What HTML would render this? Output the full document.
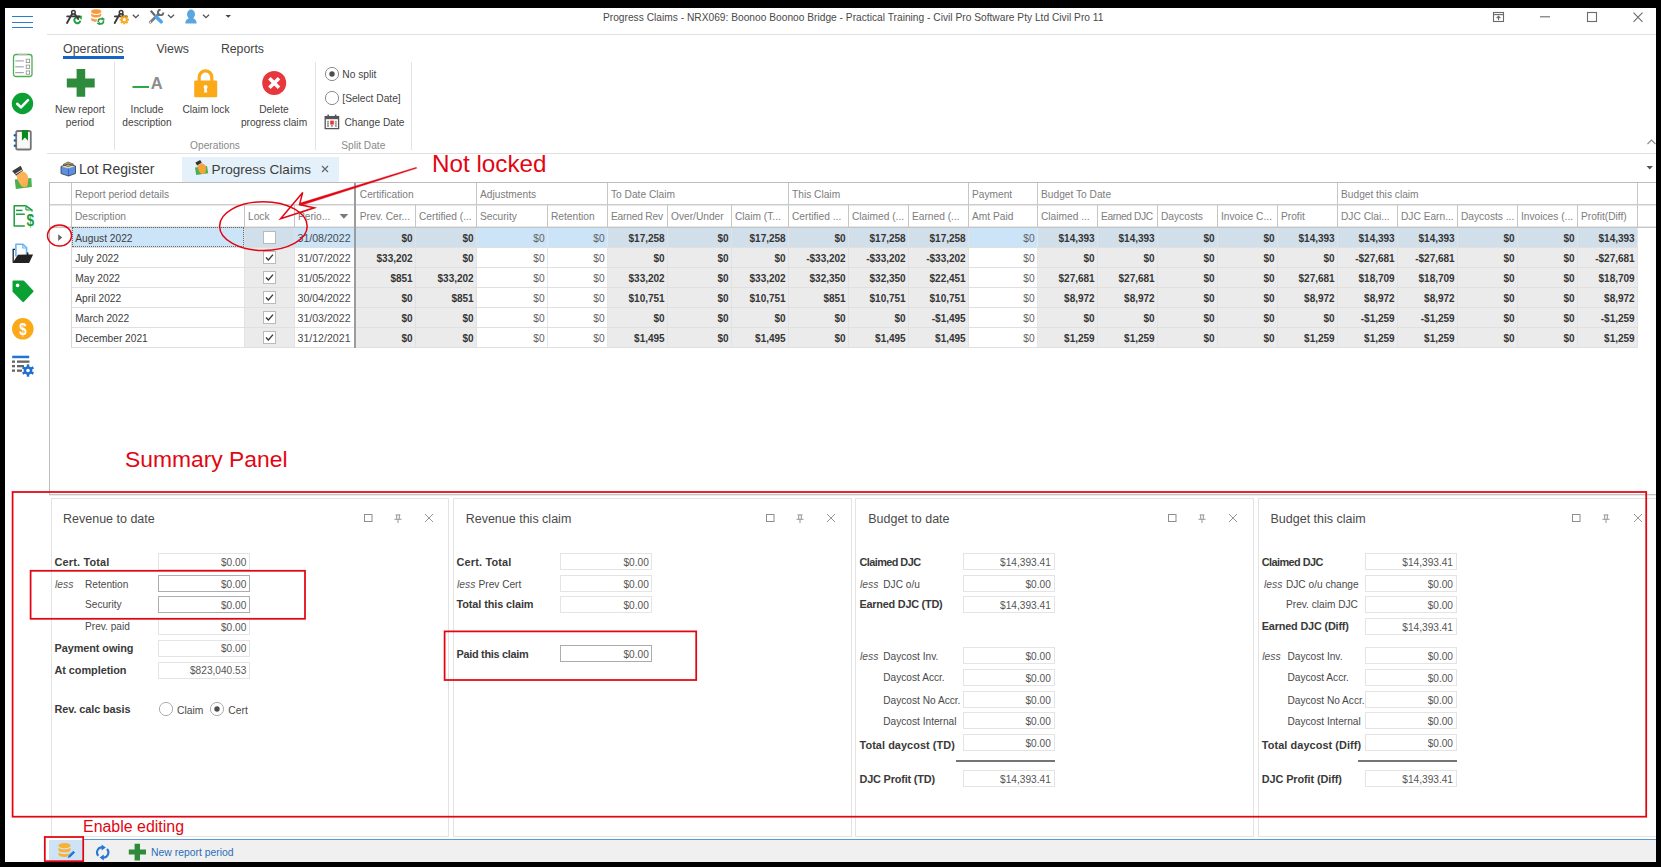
<!DOCTYPE html>
<html lang="en"><head><meta charset="utf-8"><title>Progress Claims</title><style>
html,body{margin:0;padding:0;}
body{width:1661px;height:867px;background:#000;position:relative;overflow:hidden;font-family:"Liberation Sans",sans-serif;color:#444;}
body div,body svg{position:absolute;}
.t{white-space:nowrap;overflow:visible;}
</style></head><body>
<div style="left:5px;top:8px;width:1651px;height:854px;background:#fff;"></div>
<div style="left:47px;top:34px;width:1609px;height:1px;background:#e1e1e1;"></div>
<div style="left:47px;top:153px;width:1609px;height:1px;background:#e1e1e1;"></div>
<div style="left:12px;top:16px;width:21px;height:1px;background:#2b7cd3;"></div>
<div style="left:12px;top:22px;width:21px;height:1px;background:#2b7cd3;"></div>
<div style="left:12px;top:27px;width:21px;height:1px;background:#2b7cd3;"></div>
<svg style="left:12px;top:53px;" width="22" height="25" viewBox="0 0 22 25"><rect x="1.5" y="1.5" width="18.5" height="22" rx="2.5" fill="#fff" stroke="#4caf50" stroke-width="1.3"/>
<line x1="6" y1="1.5" x2="15" y2="1.5" stroke="#b5b5b5" stroke-width="1.3"/>
<g stroke="#a8a8a8" stroke-width="1.2"><line x1="3.2" y1="7.9" x2="11.8" y2="7.9"/><line x1="3.2" y1="13.8" x2="11.8" y2="13.8"/><line x1="3.2" y1="19.6" x2="11.8" y2="19.6"/></g>
<g fill="#fff" stroke="#8f8f8f" stroke-width="0.8"><rect x="14.2" y="6.2" width="3.4" height="3.4"/><rect x="14.2" y="12.1" width="3.4" height="3.4"/><rect x="14.2" y="17.9" width="3.4" height="3.4"/></g></svg>
<svg style="left:11px;top:92px;" width="23" height="23" viewBox="0 0 23 23"><circle cx="11.5" cy="11.5" r="10.7" fill="#0ba034"/><path d="M6.2 11.8 L10 15.4 L17 8.2" fill="none" stroke="#fff" stroke-width="2.6" stroke-linecap="round" stroke-linejoin="round"/></svg>
<svg style="left:11px;top:129px;" width="23" height="23" viewBox="0 0 23 23"><rect x="5.2" y="2" width="14.6" height="18.5" rx="1.6" fill="#f8f8f8" stroke="#757575" stroke-width="1.8"/>
<path d="M10.9 1.1 H17 V11.7 L13.95 8.6 L10.9 11.7 Z" fill="#0a8a1c"/>
<g fill="#1f5f9f"><circle cx="3.9" cy="6.2" r="1.25"/><circle cx="3.9" cy="11.5" r="1.25"/><circle cx="3.9" cy="16.8" r="1.25"/></g></svg>
<svg style="left:10px;top:164px;" width="25" height="26" viewBox="0 0 25 26"><path d="M4.7 15.4 L21.3 13.9 L21.9 23.1 L5.9 24.9 Z" fill="#4caf50"/>
<path d="M2.2 7 L10.7 1.8 L13 6.7 L6.1 11.8 Z" fill="#3d3d3d"/><path d="M5.4 10 L12.3 5.9" stroke="#eee" stroke-width="1"/>
<path d="M6.6 11.6 L12.6 7.2 C16 8 18.6 11.4 18.2 15.4 L17.6 21.2 C16.6 23.4 13.6 23.6 12 22.4 C9 19.6 7.2 15.6 6.6 11.6 Z" fill="#fdb256"/>
<path d="M13.4 18.6 L13.8 22.4 M15.2 18.2 L15.6 22 M16.8 17.6 L17 20.8" stroke="#f7a03e" stroke-width="0.6"/></svg>
<svg style="left:11px;top:203px;" width="25" height="26" viewBox="0 0 25 26"><path d="M14.7 2.7 H3.2 V23.1 H13.8 M14.7 2.7 L21 7 V8.6" fill="none" stroke="#1b9e3e" stroke-width="1.5" stroke-linejoin="round"/>
<path d="M14.9 3.2 V7 H20.4 Z" fill="#cfe8d3" stroke="#1b9e3e" stroke-width="1" stroke-linejoin="round"/>
<g stroke="#1b9e3e" stroke-width="1.5"><line x1="5" y1="7.4" x2="11.5" y2="7.4"/><line x1="5" y1="11.2" x2="13.8" y2="11.2"/></g>
<text transform="translate(19.3,23.4) scale(0.8,1)" font-family="Liberation Sans, sans-serif" font-weight="bold" font-size="17.2" fill="#1b9e3e" text-anchor="middle">$</text></svg>
<svg style="left:11px;top:242px;" width="25" height="23" viewBox="0 0 25 23"><path d="M4.9 14.5 V2.2 H12 L15.6 5.8 V12" fill="#fff" stroke="#64b5f6" stroke-width="1.6" stroke-linejoin="round"/>
<path d="M11.8 2.4 V6 H15.4" fill="none" stroke="#64b5f6" stroke-width="1.2"/>
<path d="M4 7.4 H2.2 V20.4" fill="none" stroke="#222" stroke-width="1.3"/><path d="M6.9 12.7 L15.8 12.5 V10.6 H17.4 V12.5 L22.1 12.4 L18.1 20.9 H1.6 Z" fill="#222"/></svg>
<svg style="left:11px;top:279px;" width="24" height="25" viewBox="0 0 24 25"><path d="M2.6 2.6 H12.2 L21.4 12.3 L12.2 22 L2.6 12.3 Z" fill="#0ba034" stroke="#0ba034" stroke-width="2.2" stroke-linejoin="round"/><circle cx="6.6" cy="6.4" r="1.8" fill="#fff"/></svg>
<svg style="left:11px;top:317px;" width="24" height="24" viewBox="0 0 24 24"><circle cx="11.8" cy="11.8" r="10.8" fill="#fba919"/><text transform="translate(11.9,17.8) scale(0.78,1)" font-family="Liberation Sans, sans-serif" font-weight="bold" font-size="17" fill="#fff" text-anchor="middle">$</text></svg>
<svg style="left:11px;top:355px;" width="24" height="23" viewBox="0 0 24 23"><rect x="1.2" y="0.7" width="17" height="2.5" fill="#2273d6"/>
<g fill="#666"><rect x="1" y="5.5" width="3" height="2.3"/><rect x="6" y="5.5" width="12.5" height="2.3"/><rect x="1" y="10" width="3" height="2.3"/><rect x="6" y="10" width="7" height="2.3"/><rect x="1" y="14.5" width="3" height="2.3"/><rect x="6" y="14.5" width="5" height="2.3"/></g>
<g transform="translate(17,15.5)"><g fill="#1e6fd0"><circle r="4.3"/><g><rect x="-1.2" y="-6.2" width="2.4" height="12.4"/><rect x="-1.2" y="-6.2" width="2.4" height="12.4" transform="rotate(60)"/><rect x="-1.2" y="-6.2" width="2.4" height="12.4" transform="rotate(120)"/></g></g><circle r="1.8" fill="#fff"/></g></svg>
<svg style="left:65px;top:9px;" width="170" height="16" viewBox="0 0 170 16"><g transform="translate(12.3,11.1)"><path d="M2.2 -2 A3 3 0 1 0 3 0.6" fill="none" stroke="#18a03c" stroke-width="2"/><path d="M0.4 -4.6 L4.6 -4.4 L4.2 -0.2 Z" fill="#18a03c"/></g><g transform="translate(0,0)" fill="none" stroke="#3b3b3b" stroke-width="1.9" stroke-linecap="round"><circle cx="8.4" cy="3.2" r="1.8" stroke-width="1.5"/><path d="M7 5 L2 14 M9.8 5 L13.2 10 M2.2 7.4 H14.2" /></g><g transform="translate(26,0)"><g fill="#fb9a3c"><ellipse cx="5.2" cy="2.6" rx="5" ry="2.3"/><path d="M0.2 4.2 C1 6.6 9.4 6.6 10.2 4.2 V6.8 C9.4 9.2 1 9.2 0.2 6.8 Z"/><path d="M0.2 8.4 C1 10.8 9.4 10.8 10.2 8.4 V11 C9.4 13.4 1 13.4 0.2 11 Z"/></g>
<circle cx="9.9" cy="12.3" r="4.3" fill="#fff"/><g transform="translate(9.9,12.3)"><circle r="2.6" fill="none" stroke="#2e9b4b" stroke-width="1.6"/><rect x="-4.5" y="-0.7" width="9" height="1.4" fill="#fff" transform="rotate(-35)"/><path d="M0.8 -4.3 L4.3 -2 L1 -0.7 Z" fill="#2e9b4b"/><path d="M-0.8 4.3 L-4.3 2 L-1 0.7 Z" fill="#2e9b4b"/></g></g><g transform="translate(47.7,0)" fill="none" stroke="#3b3b3b" stroke-width="1.9" stroke-linecap="round"><circle cx="8.4" cy="3.2" r="1.8" stroke-width="1.5"/><path d="M7 5 L2 14 M9.8 5 L13.2 10 M2.2 7.4 H14.2" /></g><g transform="translate(59.3,10.7)"><g fill="#f6a821"><circle r="3.3"/><rect x="-1" y="-4.6" width="2" height="9.2"/><rect x="-1" y="-4.6" width="2" height="9.2" transform="rotate(45)"/><rect x="-1" y="-4.6" width="2" height="9.2" transform="rotate(90)"/><rect x="-1" y="-4.6" width="2" height="9.2" transform="rotate(135)"/></g><circle r="1.6" fill="#fff"/></g><path d="M67.8 5.7 L70.8 8.7 L73.8 5.7" fill="none" stroke="#555" stroke-width="1.3"/><g stroke-linecap="round" fill="none"><path d="M85.3 13.3 L93.3 5.3" stroke="#7a7a7a" stroke-width="2.7"/><circle cx="85.4" cy="13.2" r="0.7" fill="#fff" stroke="none"/>
<path d="M95.6 0.7 A2.7 2.7 0 1 0 98.3 3.4" stroke="#6a6a6a" stroke-width="1.9" stroke-linecap="butt"/>
<path d="M85.8 1.8 L90.2 6.9" stroke="#666" stroke-width="2.2" stroke-linecap="butt"/><path d="M91 7.7 L96.2 12.8" stroke="#4da3f0" stroke-width="3.6"/></g><path d="M103 5.7 L106 8.7 L109 5.7" fill="none" stroke="#555" stroke-width="1.3"/><g transform="translate(120,0)" fill="#5aa7e0"><ellipse cx="6" cy="5.2" rx="4" ry="4.6"/><path d="M0.3 14.4 C0.6 10.4 3 9.6 4.2 9 H7.8 C9 9.6 11.4 10.4 11.7 14.4 Z"/></g><path d="M138 5.7 L141 8.7 L144 5.7" fill="none" stroke="#555" stroke-width="1.3"/><path d="M160.5 6 H166 L163.25 8.8 Z" fill="#444"/></svg>
<div class="t" style="top:10px;height:16px;line-height:16px;font-size:10.2px;color:#4a4a4a;left:553.2px;width:600px;text-align:center;letter-spacing:0.012px;">Progress Claims - NRX069: Boonoo Boonoo Bridge - Practical Training - Civil Pro Software Pty Ltd Civil Pro 11</div>
<svg style="left:1490px;top:10px;" width="160" height="14" viewBox="0 0 160 14"><g fill="none" stroke="#6a6a6a" stroke-width="1.1"><rect x="3.5" y="2.5" width="10" height="9"/><line x1="3.5" y1="4.6" x2="13.5" y2="4.6"/><path d="M8.5 10.2 V6.4 M6.6 8.2 L8.5 6.3 L10.4 8.2"/>
<line x1="50" y1="6.8" x2="60" y2="6.8"/><rect x="97.5" y="2.5" width="9" height="9"/><path d="M143.5 2.6 L152.5 11.8 M152.5 2.6 L143.5 11.8"/></g></svg>
<div class="t" style="top:41px;height:16px;line-height:16px;font-size:12.45px;color:#444;left:63px;">Operations</div>
<div class="t" style="top:41px;height:16px;line-height:16px;font-size:12.3px;color:#444;left:156.4px;">Views</div>
<div class="t" style="top:41px;height:16px;line-height:16px;font-size:12.3px;color:#444;left:220.9px;">Reports</div>
<div style="left:63px;top:56px;width:61px;height:3px;background:#1565c8;"></div>
<div style="left:114px;top:62px;width:1px;height:88px;background:#e2e2e2;"></div>
<div style="left:315px;top:62px;width:1px;height:88px;background:#e2e2e2;"></div>
<div style="left:411px;top:62px;width:1px;height:88px;background:#e2e2e2;"></div>
<svg style="left:66px;top:68px;" width="30" height="30" viewBox="0 0 30 30"><path d="M10.6 1 H19.2 V10.5 H28.7 V19.5 H19.2 V28.8 H10.6 V19.5 H0.8 V10.5 H10.6 Z" fill="#2e8b3b"/></svg>
<div class="t" style="top:102px;height:16px;line-height:16px;font-size:10.2px;color:#444;left:20.0px;width:120px;text-align:center;">New report</div>
<div class="t" style="top:115px;height:16px;line-height:16px;font-size:10.2px;color:#444;left:20.0px;width:120px;text-align:center;">period</div>
<svg style="left:131px;top:74px;" width="34" height="18" viewBox="0 0 34 18"><rect x="1.5" y="12" width="16.5" height="2" fill="#2fa84a"/><text x="25.7" y="14.6" font-family="Liberation Sans, sans-serif" font-weight="bold" font-size="16.5" fill="#8c8c8c" text-anchor="middle">A</text></svg>
<div class="t" style="top:102px;height:16px;line-height:16px;font-size:10.2px;left:87.0px;width:120px;text-align:center;">Include</div>
<div class="t" style="top:115px;height:16px;line-height:16px;font-size:10.2px;left:87.0px;width:120px;text-align:center;">description</div>
<svg style="left:192px;top:68px;" width="28" height="31" viewBox="0 0 28 31"><path d="M7.2 14 V9.2 A6.3 6.3 0 0 1 19.8 9.2 V14" fill="none" stroke="#fba919" stroke-width="3.2"/><rect x="2.2" y="12.6" width="23" height="16.6" rx="1.2" fill="#fba919"/>
<circle cx="13.6" cy="19" r="2" fill="#fff"/><path d="M12.6 19.5 H14.6 L15.2 24.6 H12 Z" fill="#fff"/></svg>
<div class="t" style="top:102px;height:16px;line-height:16px;font-size:10.2px;left:146.0px;width:120px;text-align:center;">Claim lock</div>
<svg style="left:261px;top:70px;" width="27" height="27" viewBox="0 0 27 27"><circle cx="13.2" cy="13" r="12" fill="#e8363d"/><path d="M8.4 8.2 L18 17.8 M18 8.2 L8.4 17.8" stroke="#fff" stroke-width="3.6"/></svg>
<div class="t" style="top:102px;height:16px;line-height:16px;font-size:10.2px;left:214.0px;width:120px;text-align:center;">Delete</div>
<div class="t" style="top:115px;height:16px;line-height:16px;font-size:10.2px;left:214.0px;width:120px;text-align:center;">progress claim</div>
<svg style="left:323.7px;top:66px;" width="16" height="16" viewBox="0 0 16 16"><circle cx="8" cy="8" r="6.6" fill="#fff" stroke="#8c8c8c" stroke-width="1"/><circle cx="8" cy="8" r="2.7" fill="#4d4d4d"/></svg>
<div class="t" style="top:67px;height:16px;line-height:16px;font-size:10.2px;left:342.3px;">No split</div>
<svg style="left:323.7px;top:89.8px;" width="16" height="16" viewBox="0 0 16 16"><circle cx="8" cy="8" r="6.6" fill="#fff" stroke="#8c8c8c" stroke-width="1"/></svg>
<div class="t" style="top:91px;height:16px;line-height:16px;font-size:10.2px;left:342.3px;">[Select Date]</div>
<svg style="left:324px;top:114px;" width="16" height="16" viewBox="0 0 16 16"><rect x="1.2" y="2.6" width="13.4" height="12" fill="#fff" stroke="#555" stroke-width="1.3"/><rect x="1.2" y="2.6" width="13.4" height="2.6" fill="#555"/>
<rect x="3.4" y="0.6" width="1.6" height="3" fill="#555"/><rect x="10.8" y="0.6" width="1.6" height="3" fill="#555"/>
<g fill="#9a9a9a"><rect x="3" y="6.8" width="2" height="1.8"/><rect x="10.8" y="6.8" width="2" height="1.8"/><rect x="3" y="11" width="2" height="1.8"/><rect x="6.9" y="11" width="2" height="1.8"/><rect x="10.8" y="11" width="2" height="1.8"/><rect x="3" y="8.9" width="2" height="1.8"/><rect x="10.8" y="8.9" width="2" height="1.8"/></g><rect x="6.2" y="6.6" width="3.6" height="4" fill="#e53935"/></svg>
<div class="t" style="top:115px;height:16px;line-height:16px;font-size:10.2px;left:344.4px;">Change Date</div>
<div class="t" style="top:138px;height:16px;line-height:16px;font-size:10.2px;color:#8a8a8a;left:155.0px;width:120px;text-align:center;">Operations</div>
<div class="t" style="top:138px;height:16px;line-height:16px;font-size:10.2px;color:#8a8a8a;left:303.3px;width:120px;text-align:center;">Split Date</div>
<svg style="left:1646px;top:137px;" width="10" height="10" viewBox="0 0 10 10"><path d="M1.5 7 L5.5 3 L9.5 7" fill="none" stroke="#8a8a8a" stroke-width="1.1"/></svg>
<div style="left:182px;top:157px;width:157px;height:26px;background:#e4f0fa;"></div>
<svg style="left:59px;top:160px;" width="18" height="17" viewBox="0 0 18 17"><path d="M2 6.5 L9 4 L16.5 6 V13.5 L9.5 16 L2 13.5 Z" fill="#5b8fe6"/><path d="M2 6.5 L9.5 8.6 L16.5 6 L9 4 Z" fill="#e8d9a8"/><path d="M4 4.6 L9 2 L14.6 4.2 L9.4 6.6 Z" fill="#c9b77b" stroke="#555" stroke-width="0.8"/><path d="M9.5 8.6 V16" stroke="#2c5fa6" stroke-width="0.8"/><path d="M2 6.5 L9 4 L16.5 6 V13.5 L9.5 16 L2 13.5 Z" fill="none" stroke="#444" stroke-width="0.9"/></svg>
<div class="t" style="top:159px;height:20px;line-height:20px;font-size:14.0px;color:#3d3d3d;left:79px;">Lot Register</div>
<svg style="left:193px;top:159px;" width="16" height="17" viewBox="0 0 16 17"><path d="M2 8.6 L14 7 L15.2 14.2 L3.2 16 Z" fill="#4caf50"/><path d="M2.4 3.6 L7.2 1 L8.8 3.8 L4 6.4 Z" fill="#333"/>
<path d="M4.4 6.4 L9.2 4.2 C12 5.2 13.4 7.2 13 10.4 L12.2 14.2 C10.4 15.4 7.8 15.2 6.8 13.6 C5.2 11 4.8 9 4.4 6.4 Z" fill="#f6a33b"/></svg>
<div class="t" style="top:160px;height:20px;line-height:20px;font-size:13.55px;color:#3d3d3d;left:211.6px;">Progress Claims</div>
<svg style="left:320px;top:164px;" width="10" height="10" viewBox="0 0 10 10"><path d="M2 2 L8 8 M8 2 L2 8" stroke="#666" stroke-width="1.2"/></svg>
<svg style="left:1646px;top:165px;" width="8" height="6" viewBox="0 0 8 6"><path d="M0.5 1 H7 L3.75 4.4 Z" fill="#555"/></svg>
<div style="left:45px;top:840px;width:1611px;height:22px;background:#f0f0f0;"></div>
<div style="left:83px;top:839px;width:1573px;height:1px;background:#5b9bd5;"></div>
<div style="left:46px;top:839px;width:37px;height:23px;background:#fff;"></div>
<div style="left:49px;top:840px;width:34px;height:22px;background:#cfe3f6;"></div>
<svg style="left:57px;top:842px;" width="20" height="19" viewBox="0 0 20 19"><g fill="#fbb030"><ellipse cx="7.5" cy="3.6" rx="6" ry="2.6"/><path d="M1.5 5.6 C2.5 8.2 12.5 8.2 13.5 5.6 V8.4 C12.5 11 2.5 11 1.5 8.4 Z"/><path d="M1.5 10.2 C2.5 12.8 12.5 12.8 13.5 10.2 V13 C12.5 15.6 2.5 15.6 1.5 13 Z"/></g>
<path d="M10.2 16.6 L11 13.6 L16.2 8.4 L18.4 10.6 L13.2 15.8 Z" fill="#2677d4" stroke="#cfe3f6" stroke-width="0.8"/></svg>
<svg style="left:95px;top:844px;" width="16" height="17" viewBox="0 0 16 17"><g fill="none" stroke="#2677d4" stroke-width="2.1"><path d="M3.4 11.8 A5 5 0 0 1 7.6 3.4"/><path d="M12 5 A5 5 0 0 1 7.8 13.4"/></g><path d="M6.6 0.4 L10.8 3.4 L6.6 6.4 Z" fill="#2677d4"/><path d="M8.8 10.4 L4.6 13.4 L8.8 16.4 Z" fill="#2677d4"/></svg>
<svg style="left:128px;top:843px;" width="19" height="18" viewBox="0 0 19 18"><path d="M6.6 0.8 H12 V6.4 H18 V11.6 H12 V17.4 H6.6 V11.6 H0.8 V6.4 H6.6 Z" fill="#2e8b3b"/></svg>
<div class="t" style="top:845px;height:16px;line-height:16px;font-size:10.4px;color:#2a6db8;left:151px;">New report period</div>
<div style="left:49px;top:182px;width:1607px;height:1px;background:#bdbdbd;"></div>
<div style="left:49px;top:182px;width:1px;height:313px;background:#bdbdbd;"></div>
<div style="left:49px;top:494px;width:1607px;height:1px;background:#c4c4c4;"></div>
<div style="left:49px;top:495px;width:1607px;height:1px;background:#ececec;"></div>
<div style="left:49px;top:204px;width:1607px;height:1px;background:#cdcdcd;"></div>
<div style="left:49px;top:205px;width:1607px;height:1px;background:#e6e6e6;"></div>
<div style="left:49px;top:226px;width:1607px;height:1px;background:#e9e9e9;"></div>
<div style="left:49px;top:227px;width:1607px;height:1px;background:#c4c4c4;"></div>
<div style="left:49px;top:182px;width:1px;height:313px;background:#bdbdbd;"></div>
<div style="left:354px;top:183px;width:1px;height:21px;background:#c6c6c6;"></div>
<div class="t" style="top:187px;height:16px;line-height:16px;font-size:10.2px;color:#7d7d7d;left:75px;">Report period details</div>
<div style="left:476px;top:183px;width:1px;height:21px;background:#c6c6c6;"></div>
<div class="t" style="top:187px;height:16px;line-height:16px;font-size:10.2px;color:#7d7d7d;left:359.8px;">Certification</div>
<div style="left:607px;top:183px;width:1px;height:21px;background:#c6c6c6;"></div>
<div class="t" style="top:187px;height:16px;line-height:16px;font-size:10.2px;color:#7d7d7d;left:480px;">Adjustments</div>
<div style="left:788px;top:183px;width:1px;height:21px;background:#c6c6c6;"></div>
<div class="t" style="top:187px;height:16px;line-height:16px;font-size:10.2px;color:#7d7d7d;left:611px;">To Date Claim</div>
<div style="left:968px;top:183px;width:1px;height:21px;background:#c6c6c6;"></div>
<div class="t" style="top:187px;height:16px;line-height:16px;font-size:10.2px;color:#7d7d7d;left:792px;">This Claim</div>
<div style="left:1037px;top:183px;width:1px;height:21px;background:#c6c6c6;"></div>
<div class="t" style="top:187px;height:16px;line-height:16px;font-size:10.2px;color:#7d7d7d;left:972px;">Payment</div>
<div style="left:1337px;top:183px;width:1px;height:21px;background:#c6c6c6;"></div>
<div class="t" style="top:187px;height:16px;line-height:16px;font-size:10.2px;color:#7d7d7d;left:1041px;">Budget To Date</div>
<div style="left:1637px;top:183px;width:1px;height:21px;background:#c6c6c6;"></div>
<div class="t" style="top:187px;height:16px;line-height:16px;font-size:10.2px;color:#7d7d7d;left:1341px;">Budget this claim</div>
<div style="left:71px;top:183px;width:1px;height:44px;background:#c6c6c6;"></div>
<div style="left:244px;top:205px;width:1px;height:22px;background:#c6c6c6;"></div>
<div class="t" style="top:209px;height:16px;line-height:16px;font-size:10.2px;color:#7d7d7d;left:75px;">Description</div>
<div style="left:294px;top:205px;width:1px;height:22px;background:#c6c6c6;"></div>
<div class="t" style="top:209px;height:16px;line-height:16px;font-size:10.2px;color:#7d7d7d;left:248px;">Lock</div>
<div style="left:354px;top:205px;width:1px;height:22px;background:#c6c6c6;"></div>
<div class="t" style="top:209px;height:16px;line-height:16px;font-size:10.2px;color:#7d7d7d;left:298px;">Perio...</div>
<div style="left:415px;top:205px;width:1px;height:22px;background:#c6c6c6;"></div>
<div class="t" style="top:209px;height:16px;line-height:16px;font-size:10.2px;color:#7d7d7d;left:359.8px;">Prev. Cer...</div>
<div style="left:476px;top:205px;width:1px;height:22px;background:#c6c6c6;"></div>
<div class="t" style="top:209px;height:16px;line-height:16px;font-size:10.2px;color:#7d7d7d;left:419px;">Certified (...</div>
<div style="left:547px;top:205px;width:1px;height:22px;background:#c6c6c6;"></div>
<div class="t" style="top:209px;height:16px;line-height:16px;font-size:10.2px;color:#7d7d7d;left:480px;">Security</div>
<div style="left:607px;top:205px;width:1px;height:22px;background:#c6c6c6;"></div>
<div class="t" style="top:209px;height:16px;line-height:16px;font-size:10.2px;color:#7d7d7d;left:551px;">Retention</div>
<div style="left:667px;top:205px;width:1px;height:22px;background:#c6c6c6;"></div>
<div class="t" style="top:209px;height:16px;line-height:16px;font-size:10.2px;color:#7d7d7d;left:611px;letter-spacing:-0.2px;">Earned Rev</div>
<div style="left:731px;top:205px;width:1px;height:22px;background:#c6c6c6;"></div>
<div class="t" style="top:209px;height:16px;line-height:16px;font-size:10.2px;color:#7d7d7d;left:671px;">Over/Under</div>
<div style="left:788px;top:205px;width:1px;height:22px;background:#c6c6c6;"></div>
<div class="t" style="top:209px;height:16px;line-height:16px;font-size:10.2px;color:#7d7d7d;left:735px;">Claim (T...</div>
<div style="left:848px;top:205px;width:1px;height:22px;background:#c6c6c6;"></div>
<div class="t" style="top:209px;height:16px;line-height:16px;font-size:10.2px;color:#7d7d7d;left:792px;">Certified ...</div>
<div style="left:908px;top:205px;width:1px;height:22px;background:#c6c6c6;"></div>
<div class="t" style="top:209px;height:16px;line-height:16px;font-size:10.2px;color:#7d7d7d;left:852px;">Claimed (...</div>
<div style="left:968px;top:205px;width:1px;height:22px;background:#c6c6c6;"></div>
<div class="t" style="top:209px;height:16px;line-height:16px;font-size:10.2px;color:#7d7d7d;left:912px;">Earned (...</div>
<div style="left:1037px;top:205px;width:1px;height:22px;background:#c6c6c6;"></div>
<div class="t" style="top:209px;height:16px;line-height:16px;font-size:10.2px;color:#7d7d7d;left:972px;">Amt Paid</div>
<div style="left:1097px;top:205px;width:1px;height:22px;background:#c6c6c6;"></div>
<div class="t" style="top:209px;height:16px;line-height:16px;font-size:10.2px;color:#7d7d7d;left:1041px;">Claimed ...</div>
<div style="left:1157px;top:205px;width:1px;height:22px;background:#c6c6c6;"></div>
<div class="t" style="top:209px;height:16px;line-height:16px;font-size:10.2px;color:#7d7d7d;left:1101px;letter-spacing:-0.37px;">Earned DJC</div>
<div style="left:1217px;top:205px;width:1px;height:22px;background:#c6c6c6;"></div>
<div class="t" style="top:209px;height:16px;line-height:16px;font-size:10.2px;color:#7d7d7d;left:1161px;">Daycosts</div>
<div style="left:1277px;top:205px;width:1px;height:22px;background:#c6c6c6;"></div>
<div class="t" style="top:209px;height:16px;line-height:16px;font-size:10.2px;color:#7d7d7d;left:1221px;">Invoice C...</div>
<div style="left:1337px;top:205px;width:1px;height:22px;background:#c6c6c6;"></div>
<div class="t" style="top:209px;height:16px;line-height:16px;font-size:10.2px;color:#7d7d7d;left:1281px;">Profit</div>
<div style="left:1397px;top:205px;width:1px;height:22px;background:#c6c6c6;"></div>
<div class="t" style="top:209px;height:16px;line-height:16px;font-size:10.2px;color:#7d7d7d;left:1341px;">DJC Clai...</div>
<div style="left:1457px;top:205px;width:1px;height:22px;background:#c6c6c6;"></div>
<div class="t" style="top:209px;height:16px;line-height:16px;font-size:10.2px;color:#7d7d7d;left:1401px;">DJC Earn...</div>
<div style="left:1517px;top:205px;width:1px;height:22px;background:#c6c6c6;"></div>
<div class="t" style="top:209px;height:16px;line-height:16px;font-size:10.2px;color:#7d7d7d;left:1461px;">Daycosts ...</div>
<div style="left:1577px;top:205px;width:1px;height:22px;background:#c6c6c6;"></div>
<div class="t" style="top:209px;height:16px;line-height:16px;font-size:10.2px;color:#7d7d7d;left:1521px;">Invoices (...</div>
<div style="left:1637px;top:205px;width:1px;height:22px;background:#c6c6c6;"></div>
<div class="t" style="top:209px;height:16px;line-height:16px;font-size:10.2px;color:#7d7d7d;left:1581px;">Profit(Diff)</div>
<div style="left:354px;top:183px;width:2px;height:165px;background:#9c9c9c;"></div>
<svg style="left:339px;top:213px;" width="10" height="7" viewBox="0 0 10 7"><path d="M0.6 1 H9.2 L4.9 5.8 Z" fill="#7a7a7a"/></svg>
<div style="left:72px;top:228px;width:172px;height:19px;background:#cce4f7;"></div>
<div class="t" style="top:231px;height:16px;line-height:16px;font-size:10.2px;color:#3c3c3c;left:75.3px;">August 2022</div>
<div style="left:245px;top:228px;width:49px;height:19px;background:#d1dfea;"></div>
<svg style="left:263px;top:231px;" width="13" height="13" viewBox="0 0 13 13"><rect x="0.5" y="0.5" width="12" height="12" fill="#fff" stroke="#b9b9b9"/></svg>
<div style="left:295px;top:228px;width:59px;height:19px;background:#cce4f7;"></div>
<div class="t" style="top:230px;height:16px;line-height:16px;font-size:10.6px;color:#4a4a4a;left:297.5px;">31/08/2022</div>
<div style="left:356px;top:228px;width:59px;height:19px;background:#d1dfea;"></div>
<div class="t" style="top:231px;height:16px;line-height:16px;font-size:10.0px;color:#353535;font-weight:bold;left:352.7px;width:60px;text-align:right;">$0</div>
<div style="left:415px;top:228px;width:1px;height:19px;background:#e2e2e2;"></div>
<div style="left:416px;top:228px;width:60px;height:19px;background:#d1dfea;"></div>
<div class="t" style="top:231px;height:16px;line-height:16px;font-size:10.0px;color:#353535;font-weight:bold;left:413.7px;width:60px;text-align:right;">$0</div>
<div style="left:476px;top:228px;width:1px;height:19px;background:#e2e2e2;"></div>
<div style="left:477px;top:228px;width:70px;height:19px;background:#cce4f7;"></div>
<div class="t" style="top:231px;height:16px;line-height:16px;font-size:10.2px;color:#626262;left:484.70000000000005px;width:60px;text-align:right;">$0</div>
<div style="left:547px;top:228px;width:1px;height:19px;background:#e6e6e6;"></div>
<div style="left:548px;top:228px;width:59px;height:19px;background:#cce4f7;"></div>
<div class="t" style="top:231px;height:16px;line-height:16px;font-size:10.2px;color:#626262;left:544.7px;width:60px;text-align:right;">$0</div>
<div style="left:607px;top:228px;width:1px;height:19px;background:#e6e6e6;"></div>
<div style="left:608px;top:228px;width:59px;height:19px;background:#d1dfea;"></div>
<div class="t" style="top:231px;height:16px;line-height:16px;font-size:10.0px;color:#353535;font-weight:bold;left:604.7px;width:60px;text-align:right;">$17,258</div>
<div style="left:667px;top:228px;width:1px;height:19px;background:#e2e2e2;"></div>
<div style="left:668px;top:228px;width:63px;height:19px;background:#d1dfea;"></div>
<div class="t" style="top:231px;height:16px;line-height:16px;font-size:10.0px;color:#353535;font-weight:bold;left:668.7px;width:60px;text-align:right;">$0</div>
<div style="left:731px;top:228px;width:1px;height:19px;background:#e2e2e2;"></div>
<div style="left:732px;top:228px;width:56px;height:19px;background:#d1dfea;"></div>
<div class="t" style="top:231px;height:16px;line-height:16px;font-size:10.0px;color:#353535;font-weight:bold;left:725.7px;width:60px;text-align:right;">$17,258</div>
<div style="left:788px;top:228px;width:1px;height:19px;background:#e2e2e2;"></div>
<div style="left:789px;top:228px;width:59px;height:19px;background:#d1dfea;"></div>
<div class="t" style="top:231px;height:16px;line-height:16px;font-size:10.0px;color:#353535;font-weight:bold;left:785.7px;width:60px;text-align:right;">$0</div>
<div style="left:848px;top:228px;width:1px;height:19px;background:#e2e2e2;"></div>
<div style="left:849px;top:228px;width:59px;height:19px;background:#d1dfea;"></div>
<div class="t" style="top:231px;height:16px;line-height:16px;font-size:10.0px;color:#353535;font-weight:bold;left:845.7px;width:60px;text-align:right;">$17,258</div>
<div style="left:908px;top:228px;width:1px;height:19px;background:#e2e2e2;"></div>
<div style="left:909px;top:228px;width:59px;height:19px;background:#d1dfea;"></div>
<div class="t" style="top:231px;height:16px;line-height:16px;font-size:10.0px;color:#353535;font-weight:bold;left:905.7px;width:60px;text-align:right;">$17,258</div>
<div style="left:968px;top:228px;width:1px;height:19px;background:#e2e2e2;"></div>
<div style="left:969px;top:228px;width:68px;height:19px;background:#cce4f7;"></div>
<div class="t" style="top:231px;height:16px;line-height:16px;font-size:10.2px;color:#626262;left:974.7px;width:60px;text-align:right;">$0</div>
<div style="left:1037px;top:228px;width:1px;height:19px;background:#e6e6e6;"></div>
<div style="left:1038px;top:228px;width:59px;height:19px;background:#d1dfea;"></div>
<div class="t" style="top:231px;height:16px;line-height:16px;font-size:10.0px;color:#353535;font-weight:bold;left:1034.7px;width:60px;text-align:right;">$14,393</div>
<div style="left:1097px;top:228px;width:1px;height:19px;background:#e2e2e2;"></div>
<div style="left:1098px;top:228px;width:59px;height:19px;background:#d1dfea;"></div>
<div class="t" style="top:231px;height:16px;line-height:16px;font-size:10.0px;color:#353535;font-weight:bold;left:1094.7px;width:60px;text-align:right;">$14,393</div>
<div style="left:1157px;top:228px;width:1px;height:19px;background:#e2e2e2;"></div>
<div style="left:1158px;top:228px;width:59px;height:19px;background:#d1dfea;"></div>
<div class="t" style="top:231px;height:16px;line-height:16px;font-size:10.0px;color:#353535;font-weight:bold;left:1154.7px;width:60px;text-align:right;">$0</div>
<div style="left:1217px;top:228px;width:1px;height:19px;background:#e2e2e2;"></div>
<div style="left:1218px;top:228px;width:59px;height:19px;background:#d1dfea;"></div>
<div class="t" style="top:231px;height:16px;line-height:16px;font-size:10.0px;color:#353535;font-weight:bold;left:1214.7px;width:60px;text-align:right;">$0</div>
<div style="left:1277px;top:228px;width:1px;height:19px;background:#e2e2e2;"></div>
<div style="left:1278px;top:228px;width:59px;height:19px;background:#d1dfea;"></div>
<div class="t" style="top:231px;height:16px;line-height:16px;font-size:10.0px;color:#353535;font-weight:bold;left:1274.7px;width:60px;text-align:right;">$14,393</div>
<div style="left:1337px;top:228px;width:1px;height:19px;background:#e2e2e2;"></div>
<div style="left:1338px;top:228px;width:59px;height:19px;background:#d1dfea;"></div>
<div class="t" style="top:231px;height:16px;line-height:16px;font-size:10.0px;color:#353535;font-weight:bold;left:1334.7px;width:60px;text-align:right;">$14,393</div>
<div style="left:1397px;top:228px;width:1px;height:19px;background:#e2e2e2;"></div>
<div style="left:1398px;top:228px;width:59px;height:19px;background:#d1dfea;"></div>
<div class="t" style="top:231px;height:16px;line-height:16px;font-size:10.0px;color:#353535;font-weight:bold;left:1394.7px;width:60px;text-align:right;">$14,393</div>
<div style="left:1457px;top:228px;width:1px;height:19px;background:#e2e2e2;"></div>
<div style="left:1458px;top:228px;width:59px;height:19px;background:#d1dfea;"></div>
<div class="t" style="top:231px;height:16px;line-height:16px;font-size:10.0px;color:#353535;font-weight:bold;left:1454.7px;width:60px;text-align:right;">$0</div>
<div style="left:1517px;top:228px;width:1px;height:19px;background:#e2e2e2;"></div>
<div style="left:1518px;top:228px;width:59px;height:19px;background:#d1dfea;"></div>
<div class="t" style="top:231px;height:16px;line-height:16px;font-size:10.0px;color:#353535;font-weight:bold;left:1514.7px;width:60px;text-align:right;">$0</div>
<div style="left:1577px;top:228px;width:1px;height:19px;background:#e2e2e2;"></div>
<div style="left:1578px;top:228px;width:59px;height:19px;background:#d1dfea;"></div>
<div class="t" style="top:231px;height:16px;line-height:16px;font-size:10.0px;color:#353535;font-weight:bold;left:1574.7px;width:60px;text-align:right;">$14,393</div>
<div style="left:1637px;top:228px;width:1px;height:19px;background:#e2e2e2;"></div>
<div style="left:244px;top:228px;width:1px;height:19px;background:#e2e2e2;"></div>
<div style="left:294px;top:228px;width:1px;height:19px;background:#e2e2e2;"></div>
<div style="left:72px;top:247px;width:1566px;height:1px;background:#e0e0e0;"></div>
<div style="left:72px;top:248px;width:172px;height:19px;background:#fff;"></div>
<div class="t" style="top:251px;height:16px;line-height:16px;font-size:10.2px;color:#3c3c3c;left:75.3px;">July 2022</div>
<div style="left:245px;top:248px;width:49px;height:19px;background:#ebebeb;"></div>
<svg style="left:263px;top:251px;" width="13" height="13" viewBox="0 0 13 13"><rect x="0.5" y="0.5" width="12" height="12" fill="#fff" stroke="#b9b9b9"/><path d="M3 6.6 L5.4 9 L10 3.6" fill="none" stroke="#3a3a3a" stroke-width="1.4"/></svg>
<div style="left:295px;top:248px;width:59px;height:19px;background:#fff;"></div>
<div class="t" style="top:250px;height:16px;line-height:16px;font-size:10.6px;color:#4a4a4a;left:297.5px;">31/07/2022</div>
<div style="left:356px;top:248px;width:59px;height:19px;background:#ebebeb;"></div>
<div class="t" style="top:251px;height:16px;line-height:16px;font-size:10.0px;color:#353535;font-weight:bold;left:352.7px;width:60px;text-align:right;">$33,202</div>
<div style="left:415px;top:248px;width:1px;height:19px;background:#e2e2e2;"></div>
<div style="left:416px;top:248px;width:60px;height:19px;background:#ebebeb;"></div>
<div class="t" style="top:251px;height:16px;line-height:16px;font-size:10.0px;color:#353535;font-weight:bold;left:413.7px;width:60px;text-align:right;">$0</div>
<div style="left:476px;top:248px;width:1px;height:19px;background:#e2e2e2;"></div>
<div style="left:477px;top:248px;width:70px;height:19px;background:#fff;"></div>
<div class="t" style="top:251px;height:16px;line-height:16px;font-size:10.2px;color:#626262;left:484.70000000000005px;width:60px;text-align:right;">$0</div>
<div style="left:547px;top:248px;width:1px;height:19px;background:#e6e6e6;"></div>
<div style="left:548px;top:248px;width:59px;height:19px;background:#fff;"></div>
<div class="t" style="top:251px;height:16px;line-height:16px;font-size:10.2px;color:#626262;left:544.7px;width:60px;text-align:right;">$0</div>
<div style="left:607px;top:248px;width:1px;height:19px;background:#e6e6e6;"></div>
<div style="left:608px;top:248px;width:59px;height:19px;background:#ebebeb;"></div>
<div class="t" style="top:251px;height:16px;line-height:16px;font-size:10.0px;color:#353535;font-weight:bold;left:604.7px;width:60px;text-align:right;">$0</div>
<div style="left:667px;top:248px;width:1px;height:19px;background:#e2e2e2;"></div>
<div style="left:668px;top:248px;width:63px;height:19px;background:#ebebeb;"></div>
<div class="t" style="top:251px;height:16px;line-height:16px;font-size:10.0px;color:#353535;font-weight:bold;left:668.7px;width:60px;text-align:right;">$0</div>
<div style="left:731px;top:248px;width:1px;height:19px;background:#e2e2e2;"></div>
<div style="left:732px;top:248px;width:56px;height:19px;background:#ebebeb;"></div>
<div class="t" style="top:251px;height:16px;line-height:16px;font-size:10.0px;color:#353535;font-weight:bold;left:725.7px;width:60px;text-align:right;">$0</div>
<div style="left:788px;top:248px;width:1px;height:19px;background:#e2e2e2;"></div>
<div style="left:789px;top:248px;width:59px;height:19px;background:#ebebeb;"></div>
<div class="t" style="top:251px;height:16px;line-height:16px;font-size:10.0px;color:#353535;font-weight:bold;left:785.7px;width:60px;text-align:right;">-$33,202</div>
<div style="left:848px;top:248px;width:1px;height:19px;background:#e2e2e2;"></div>
<div style="left:849px;top:248px;width:59px;height:19px;background:#ebebeb;"></div>
<div class="t" style="top:251px;height:16px;line-height:16px;font-size:10.0px;color:#353535;font-weight:bold;left:845.7px;width:60px;text-align:right;">-$33,202</div>
<div style="left:908px;top:248px;width:1px;height:19px;background:#e2e2e2;"></div>
<div style="left:909px;top:248px;width:59px;height:19px;background:#ebebeb;"></div>
<div class="t" style="top:251px;height:16px;line-height:16px;font-size:10.0px;color:#353535;font-weight:bold;left:905.7px;width:60px;text-align:right;">-$33,202</div>
<div style="left:968px;top:248px;width:1px;height:19px;background:#e2e2e2;"></div>
<div style="left:969px;top:248px;width:68px;height:19px;background:#fff;"></div>
<div class="t" style="top:251px;height:16px;line-height:16px;font-size:10.2px;color:#626262;left:974.7px;width:60px;text-align:right;">$0</div>
<div style="left:1037px;top:248px;width:1px;height:19px;background:#e6e6e6;"></div>
<div style="left:1038px;top:248px;width:59px;height:19px;background:#ebebeb;"></div>
<div class="t" style="top:251px;height:16px;line-height:16px;font-size:10.0px;color:#353535;font-weight:bold;left:1034.7px;width:60px;text-align:right;">$0</div>
<div style="left:1097px;top:248px;width:1px;height:19px;background:#e2e2e2;"></div>
<div style="left:1098px;top:248px;width:59px;height:19px;background:#ebebeb;"></div>
<div class="t" style="top:251px;height:16px;line-height:16px;font-size:10.0px;color:#353535;font-weight:bold;left:1094.7px;width:60px;text-align:right;">$0</div>
<div style="left:1157px;top:248px;width:1px;height:19px;background:#e2e2e2;"></div>
<div style="left:1158px;top:248px;width:59px;height:19px;background:#ebebeb;"></div>
<div class="t" style="top:251px;height:16px;line-height:16px;font-size:10.0px;color:#353535;font-weight:bold;left:1154.7px;width:60px;text-align:right;">$0</div>
<div style="left:1217px;top:248px;width:1px;height:19px;background:#e2e2e2;"></div>
<div style="left:1218px;top:248px;width:59px;height:19px;background:#ebebeb;"></div>
<div class="t" style="top:251px;height:16px;line-height:16px;font-size:10.0px;color:#353535;font-weight:bold;left:1214.7px;width:60px;text-align:right;">$0</div>
<div style="left:1277px;top:248px;width:1px;height:19px;background:#e2e2e2;"></div>
<div style="left:1278px;top:248px;width:59px;height:19px;background:#ebebeb;"></div>
<div class="t" style="top:251px;height:16px;line-height:16px;font-size:10.0px;color:#353535;font-weight:bold;left:1274.7px;width:60px;text-align:right;">$0</div>
<div style="left:1337px;top:248px;width:1px;height:19px;background:#e2e2e2;"></div>
<div style="left:1338px;top:248px;width:59px;height:19px;background:#ebebeb;"></div>
<div class="t" style="top:251px;height:16px;line-height:16px;font-size:10.0px;color:#353535;font-weight:bold;left:1334.7px;width:60px;text-align:right;">-$27,681</div>
<div style="left:1397px;top:248px;width:1px;height:19px;background:#e2e2e2;"></div>
<div style="left:1398px;top:248px;width:59px;height:19px;background:#ebebeb;"></div>
<div class="t" style="top:251px;height:16px;line-height:16px;font-size:10.0px;color:#353535;font-weight:bold;left:1394.7px;width:60px;text-align:right;">-$27,681</div>
<div style="left:1457px;top:248px;width:1px;height:19px;background:#e2e2e2;"></div>
<div style="left:1458px;top:248px;width:59px;height:19px;background:#ebebeb;"></div>
<div class="t" style="top:251px;height:16px;line-height:16px;font-size:10.0px;color:#353535;font-weight:bold;left:1454.7px;width:60px;text-align:right;">$0</div>
<div style="left:1517px;top:248px;width:1px;height:19px;background:#e2e2e2;"></div>
<div style="left:1518px;top:248px;width:59px;height:19px;background:#ebebeb;"></div>
<div class="t" style="top:251px;height:16px;line-height:16px;font-size:10.0px;color:#353535;font-weight:bold;left:1514.7px;width:60px;text-align:right;">$0</div>
<div style="left:1577px;top:248px;width:1px;height:19px;background:#e2e2e2;"></div>
<div style="left:1578px;top:248px;width:59px;height:19px;background:#ebebeb;"></div>
<div class="t" style="top:251px;height:16px;line-height:16px;font-size:10.0px;color:#353535;font-weight:bold;left:1574.7px;width:60px;text-align:right;">-$27,681</div>
<div style="left:1637px;top:248px;width:1px;height:19px;background:#e2e2e2;"></div>
<div style="left:244px;top:248px;width:1px;height:19px;background:#e2e2e2;"></div>
<div style="left:294px;top:248px;width:1px;height:19px;background:#e2e2e2;"></div>
<div style="left:72px;top:267px;width:1566px;height:1px;background:#e0e0e0;"></div>
<div style="left:72px;top:268px;width:172px;height:19px;background:#fff;"></div>
<div class="t" style="top:271px;height:16px;line-height:16px;font-size:10.2px;color:#3c3c3c;left:75.3px;">May 2022</div>
<div style="left:245px;top:268px;width:49px;height:19px;background:#ebebeb;"></div>
<svg style="left:263px;top:271px;" width="13" height="13" viewBox="0 0 13 13"><rect x="0.5" y="0.5" width="12" height="12" fill="#fff" stroke="#b9b9b9"/><path d="M3 6.6 L5.4 9 L10 3.6" fill="none" stroke="#3a3a3a" stroke-width="1.4"/></svg>
<div style="left:295px;top:268px;width:59px;height:19px;background:#fff;"></div>
<div class="t" style="top:270px;height:16px;line-height:16px;font-size:10.6px;color:#4a4a4a;left:297.5px;">31/05/2022</div>
<div style="left:356px;top:268px;width:59px;height:19px;background:#ebebeb;"></div>
<div class="t" style="top:271px;height:16px;line-height:16px;font-size:10.0px;color:#353535;font-weight:bold;left:352.7px;width:60px;text-align:right;">$851</div>
<div style="left:415px;top:268px;width:1px;height:19px;background:#e2e2e2;"></div>
<div style="left:416px;top:268px;width:60px;height:19px;background:#ebebeb;"></div>
<div class="t" style="top:271px;height:16px;line-height:16px;font-size:10.0px;color:#353535;font-weight:bold;left:413.7px;width:60px;text-align:right;">$33,202</div>
<div style="left:476px;top:268px;width:1px;height:19px;background:#e2e2e2;"></div>
<div style="left:477px;top:268px;width:70px;height:19px;background:#fff;"></div>
<div class="t" style="top:271px;height:16px;line-height:16px;font-size:10.2px;color:#626262;left:484.70000000000005px;width:60px;text-align:right;">$0</div>
<div style="left:547px;top:268px;width:1px;height:19px;background:#e6e6e6;"></div>
<div style="left:548px;top:268px;width:59px;height:19px;background:#fff;"></div>
<div class="t" style="top:271px;height:16px;line-height:16px;font-size:10.2px;color:#626262;left:544.7px;width:60px;text-align:right;">$0</div>
<div style="left:607px;top:268px;width:1px;height:19px;background:#e6e6e6;"></div>
<div style="left:608px;top:268px;width:59px;height:19px;background:#ebebeb;"></div>
<div class="t" style="top:271px;height:16px;line-height:16px;font-size:10.0px;color:#353535;font-weight:bold;left:604.7px;width:60px;text-align:right;">$33,202</div>
<div style="left:667px;top:268px;width:1px;height:19px;background:#e2e2e2;"></div>
<div style="left:668px;top:268px;width:63px;height:19px;background:#ebebeb;"></div>
<div class="t" style="top:271px;height:16px;line-height:16px;font-size:10.0px;color:#353535;font-weight:bold;left:668.7px;width:60px;text-align:right;">$0</div>
<div style="left:731px;top:268px;width:1px;height:19px;background:#e2e2e2;"></div>
<div style="left:732px;top:268px;width:56px;height:19px;background:#ebebeb;"></div>
<div class="t" style="top:271px;height:16px;line-height:16px;font-size:10.0px;color:#353535;font-weight:bold;left:725.7px;width:60px;text-align:right;">$33,202</div>
<div style="left:788px;top:268px;width:1px;height:19px;background:#e2e2e2;"></div>
<div style="left:789px;top:268px;width:59px;height:19px;background:#ebebeb;"></div>
<div class="t" style="top:271px;height:16px;line-height:16px;font-size:10.0px;color:#353535;font-weight:bold;left:785.7px;width:60px;text-align:right;">$32,350</div>
<div style="left:848px;top:268px;width:1px;height:19px;background:#e2e2e2;"></div>
<div style="left:849px;top:268px;width:59px;height:19px;background:#ebebeb;"></div>
<div class="t" style="top:271px;height:16px;line-height:16px;font-size:10.0px;color:#353535;font-weight:bold;left:845.7px;width:60px;text-align:right;">$32,350</div>
<div style="left:908px;top:268px;width:1px;height:19px;background:#e2e2e2;"></div>
<div style="left:909px;top:268px;width:59px;height:19px;background:#ebebeb;"></div>
<div class="t" style="top:271px;height:16px;line-height:16px;font-size:10.0px;color:#353535;font-weight:bold;left:905.7px;width:60px;text-align:right;">$22,451</div>
<div style="left:968px;top:268px;width:1px;height:19px;background:#e2e2e2;"></div>
<div style="left:969px;top:268px;width:68px;height:19px;background:#fff;"></div>
<div class="t" style="top:271px;height:16px;line-height:16px;font-size:10.2px;color:#626262;left:974.7px;width:60px;text-align:right;">$0</div>
<div style="left:1037px;top:268px;width:1px;height:19px;background:#e6e6e6;"></div>
<div style="left:1038px;top:268px;width:59px;height:19px;background:#ebebeb;"></div>
<div class="t" style="top:271px;height:16px;line-height:16px;font-size:10.0px;color:#353535;font-weight:bold;left:1034.7px;width:60px;text-align:right;">$27,681</div>
<div style="left:1097px;top:268px;width:1px;height:19px;background:#e2e2e2;"></div>
<div style="left:1098px;top:268px;width:59px;height:19px;background:#ebebeb;"></div>
<div class="t" style="top:271px;height:16px;line-height:16px;font-size:10.0px;color:#353535;font-weight:bold;left:1094.7px;width:60px;text-align:right;">$27,681</div>
<div style="left:1157px;top:268px;width:1px;height:19px;background:#e2e2e2;"></div>
<div style="left:1158px;top:268px;width:59px;height:19px;background:#ebebeb;"></div>
<div class="t" style="top:271px;height:16px;line-height:16px;font-size:10.0px;color:#353535;font-weight:bold;left:1154.7px;width:60px;text-align:right;">$0</div>
<div style="left:1217px;top:268px;width:1px;height:19px;background:#e2e2e2;"></div>
<div style="left:1218px;top:268px;width:59px;height:19px;background:#ebebeb;"></div>
<div class="t" style="top:271px;height:16px;line-height:16px;font-size:10.0px;color:#353535;font-weight:bold;left:1214.7px;width:60px;text-align:right;">$0</div>
<div style="left:1277px;top:268px;width:1px;height:19px;background:#e2e2e2;"></div>
<div style="left:1278px;top:268px;width:59px;height:19px;background:#ebebeb;"></div>
<div class="t" style="top:271px;height:16px;line-height:16px;font-size:10.0px;color:#353535;font-weight:bold;left:1274.7px;width:60px;text-align:right;">$27,681</div>
<div style="left:1337px;top:268px;width:1px;height:19px;background:#e2e2e2;"></div>
<div style="left:1338px;top:268px;width:59px;height:19px;background:#ebebeb;"></div>
<div class="t" style="top:271px;height:16px;line-height:16px;font-size:10.0px;color:#353535;font-weight:bold;left:1334.7px;width:60px;text-align:right;">$18,709</div>
<div style="left:1397px;top:268px;width:1px;height:19px;background:#e2e2e2;"></div>
<div style="left:1398px;top:268px;width:59px;height:19px;background:#ebebeb;"></div>
<div class="t" style="top:271px;height:16px;line-height:16px;font-size:10.0px;color:#353535;font-weight:bold;left:1394.7px;width:60px;text-align:right;">$18,709</div>
<div style="left:1457px;top:268px;width:1px;height:19px;background:#e2e2e2;"></div>
<div style="left:1458px;top:268px;width:59px;height:19px;background:#ebebeb;"></div>
<div class="t" style="top:271px;height:16px;line-height:16px;font-size:10.0px;color:#353535;font-weight:bold;left:1454.7px;width:60px;text-align:right;">$0</div>
<div style="left:1517px;top:268px;width:1px;height:19px;background:#e2e2e2;"></div>
<div style="left:1518px;top:268px;width:59px;height:19px;background:#ebebeb;"></div>
<div class="t" style="top:271px;height:16px;line-height:16px;font-size:10.0px;color:#353535;font-weight:bold;left:1514.7px;width:60px;text-align:right;">$0</div>
<div style="left:1577px;top:268px;width:1px;height:19px;background:#e2e2e2;"></div>
<div style="left:1578px;top:268px;width:59px;height:19px;background:#ebebeb;"></div>
<div class="t" style="top:271px;height:16px;line-height:16px;font-size:10.0px;color:#353535;font-weight:bold;left:1574.7px;width:60px;text-align:right;">$18,709</div>
<div style="left:1637px;top:268px;width:1px;height:19px;background:#e2e2e2;"></div>
<div style="left:244px;top:268px;width:1px;height:19px;background:#e2e2e2;"></div>
<div style="left:294px;top:268px;width:1px;height:19px;background:#e2e2e2;"></div>
<div style="left:72px;top:287px;width:1566px;height:1px;background:#e0e0e0;"></div>
<div style="left:72px;top:288px;width:172px;height:19px;background:#fff;"></div>
<div class="t" style="top:291px;height:16px;line-height:16px;font-size:10.2px;color:#3c3c3c;left:75.3px;">April 2022</div>
<div style="left:245px;top:288px;width:49px;height:19px;background:#ebebeb;"></div>
<svg style="left:263px;top:291px;" width="13" height="13" viewBox="0 0 13 13"><rect x="0.5" y="0.5" width="12" height="12" fill="#fff" stroke="#b9b9b9"/><path d="M3 6.6 L5.4 9 L10 3.6" fill="none" stroke="#3a3a3a" stroke-width="1.4"/></svg>
<div style="left:295px;top:288px;width:59px;height:19px;background:#fff;"></div>
<div class="t" style="top:290px;height:16px;line-height:16px;font-size:10.6px;color:#4a4a4a;left:297.5px;">30/04/2022</div>
<div style="left:356px;top:288px;width:59px;height:19px;background:#ebebeb;"></div>
<div class="t" style="top:291px;height:16px;line-height:16px;font-size:10.0px;color:#353535;font-weight:bold;left:352.7px;width:60px;text-align:right;">$0</div>
<div style="left:415px;top:288px;width:1px;height:19px;background:#e2e2e2;"></div>
<div style="left:416px;top:288px;width:60px;height:19px;background:#ebebeb;"></div>
<div class="t" style="top:291px;height:16px;line-height:16px;font-size:10.0px;color:#353535;font-weight:bold;left:413.7px;width:60px;text-align:right;">$851</div>
<div style="left:476px;top:288px;width:1px;height:19px;background:#e2e2e2;"></div>
<div style="left:477px;top:288px;width:70px;height:19px;background:#fff;"></div>
<div class="t" style="top:291px;height:16px;line-height:16px;font-size:10.2px;color:#626262;left:484.70000000000005px;width:60px;text-align:right;">$0</div>
<div style="left:547px;top:288px;width:1px;height:19px;background:#e6e6e6;"></div>
<div style="left:548px;top:288px;width:59px;height:19px;background:#fff;"></div>
<div class="t" style="top:291px;height:16px;line-height:16px;font-size:10.2px;color:#626262;left:544.7px;width:60px;text-align:right;">$0</div>
<div style="left:607px;top:288px;width:1px;height:19px;background:#e6e6e6;"></div>
<div style="left:608px;top:288px;width:59px;height:19px;background:#ebebeb;"></div>
<div class="t" style="top:291px;height:16px;line-height:16px;font-size:10.0px;color:#353535;font-weight:bold;left:604.7px;width:60px;text-align:right;">$10,751</div>
<div style="left:667px;top:288px;width:1px;height:19px;background:#e2e2e2;"></div>
<div style="left:668px;top:288px;width:63px;height:19px;background:#ebebeb;"></div>
<div class="t" style="top:291px;height:16px;line-height:16px;font-size:10.0px;color:#353535;font-weight:bold;left:668.7px;width:60px;text-align:right;">$0</div>
<div style="left:731px;top:288px;width:1px;height:19px;background:#e2e2e2;"></div>
<div style="left:732px;top:288px;width:56px;height:19px;background:#ebebeb;"></div>
<div class="t" style="top:291px;height:16px;line-height:16px;font-size:10.0px;color:#353535;font-weight:bold;left:725.7px;width:60px;text-align:right;">$10,751</div>
<div style="left:788px;top:288px;width:1px;height:19px;background:#e2e2e2;"></div>
<div style="left:789px;top:288px;width:59px;height:19px;background:#ebebeb;"></div>
<div class="t" style="top:291px;height:16px;line-height:16px;font-size:10.0px;color:#353535;font-weight:bold;left:785.7px;width:60px;text-align:right;">$851</div>
<div style="left:848px;top:288px;width:1px;height:19px;background:#e2e2e2;"></div>
<div style="left:849px;top:288px;width:59px;height:19px;background:#ebebeb;"></div>
<div class="t" style="top:291px;height:16px;line-height:16px;font-size:10.0px;color:#353535;font-weight:bold;left:845.7px;width:60px;text-align:right;">$10,751</div>
<div style="left:908px;top:288px;width:1px;height:19px;background:#e2e2e2;"></div>
<div style="left:909px;top:288px;width:59px;height:19px;background:#ebebeb;"></div>
<div class="t" style="top:291px;height:16px;line-height:16px;font-size:10.0px;color:#353535;font-weight:bold;left:905.7px;width:60px;text-align:right;">$10,751</div>
<div style="left:968px;top:288px;width:1px;height:19px;background:#e2e2e2;"></div>
<div style="left:969px;top:288px;width:68px;height:19px;background:#fff;"></div>
<div class="t" style="top:291px;height:16px;line-height:16px;font-size:10.2px;color:#626262;left:974.7px;width:60px;text-align:right;">$0</div>
<div style="left:1037px;top:288px;width:1px;height:19px;background:#e6e6e6;"></div>
<div style="left:1038px;top:288px;width:59px;height:19px;background:#ebebeb;"></div>
<div class="t" style="top:291px;height:16px;line-height:16px;font-size:10.0px;color:#353535;font-weight:bold;left:1034.7px;width:60px;text-align:right;">$8,972</div>
<div style="left:1097px;top:288px;width:1px;height:19px;background:#e2e2e2;"></div>
<div style="left:1098px;top:288px;width:59px;height:19px;background:#ebebeb;"></div>
<div class="t" style="top:291px;height:16px;line-height:16px;font-size:10.0px;color:#353535;font-weight:bold;left:1094.7px;width:60px;text-align:right;">$8,972</div>
<div style="left:1157px;top:288px;width:1px;height:19px;background:#e2e2e2;"></div>
<div style="left:1158px;top:288px;width:59px;height:19px;background:#ebebeb;"></div>
<div class="t" style="top:291px;height:16px;line-height:16px;font-size:10.0px;color:#353535;font-weight:bold;left:1154.7px;width:60px;text-align:right;">$0</div>
<div style="left:1217px;top:288px;width:1px;height:19px;background:#e2e2e2;"></div>
<div style="left:1218px;top:288px;width:59px;height:19px;background:#ebebeb;"></div>
<div class="t" style="top:291px;height:16px;line-height:16px;font-size:10.0px;color:#353535;font-weight:bold;left:1214.7px;width:60px;text-align:right;">$0</div>
<div style="left:1277px;top:288px;width:1px;height:19px;background:#e2e2e2;"></div>
<div style="left:1278px;top:288px;width:59px;height:19px;background:#ebebeb;"></div>
<div class="t" style="top:291px;height:16px;line-height:16px;font-size:10.0px;color:#353535;font-weight:bold;left:1274.7px;width:60px;text-align:right;">$8,972</div>
<div style="left:1337px;top:288px;width:1px;height:19px;background:#e2e2e2;"></div>
<div style="left:1338px;top:288px;width:59px;height:19px;background:#ebebeb;"></div>
<div class="t" style="top:291px;height:16px;line-height:16px;font-size:10.0px;color:#353535;font-weight:bold;left:1334.7px;width:60px;text-align:right;">$8,972</div>
<div style="left:1397px;top:288px;width:1px;height:19px;background:#e2e2e2;"></div>
<div style="left:1398px;top:288px;width:59px;height:19px;background:#ebebeb;"></div>
<div class="t" style="top:291px;height:16px;line-height:16px;font-size:10.0px;color:#353535;font-weight:bold;left:1394.7px;width:60px;text-align:right;">$8,972</div>
<div style="left:1457px;top:288px;width:1px;height:19px;background:#e2e2e2;"></div>
<div style="left:1458px;top:288px;width:59px;height:19px;background:#ebebeb;"></div>
<div class="t" style="top:291px;height:16px;line-height:16px;font-size:10.0px;color:#353535;font-weight:bold;left:1454.7px;width:60px;text-align:right;">$0</div>
<div style="left:1517px;top:288px;width:1px;height:19px;background:#e2e2e2;"></div>
<div style="left:1518px;top:288px;width:59px;height:19px;background:#ebebeb;"></div>
<div class="t" style="top:291px;height:16px;line-height:16px;font-size:10.0px;color:#353535;font-weight:bold;left:1514.7px;width:60px;text-align:right;">$0</div>
<div style="left:1577px;top:288px;width:1px;height:19px;background:#e2e2e2;"></div>
<div style="left:1578px;top:288px;width:59px;height:19px;background:#ebebeb;"></div>
<div class="t" style="top:291px;height:16px;line-height:16px;font-size:10.0px;color:#353535;font-weight:bold;left:1574.7px;width:60px;text-align:right;">$8,972</div>
<div style="left:1637px;top:288px;width:1px;height:19px;background:#e2e2e2;"></div>
<div style="left:244px;top:288px;width:1px;height:19px;background:#e2e2e2;"></div>
<div style="left:294px;top:288px;width:1px;height:19px;background:#e2e2e2;"></div>
<div style="left:72px;top:307px;width:1566px;height:1px;background:#e0e0e0;"></div>
<div style="left:72px;top:308px;width:172px;height:19px;background:#fff;"></div>
<div class="t" style="top:311px;height:16px;line-height:16px;font-size:10.2px;color:#3c3c3c;left:75.3px;">March 2022</div>
<div style="left:245px;top:308px;width:49px;height:19px;background:#ebebeb;"></div>
<svg style="left:263px;top:311px;" width="13" height="13" viewBox="0 0 13 13"><rect x="0.5" y="0.5" width="12" height="12" fill="#fff" stroke="#b9b9b9"/><path d="M3 6.6 L5.4 9 L10 3.6" fill="none" stroke="#3a3a3a" stroke-width="1.4"/></svg>
<div style="left:295px;top:308px;width:59px;height:19px;background:#fff;"></div>
<div class="t" style="top:310px;height:16px;line-height:16px;font-size:10.6px;color:#4a4a4a;left:297.5px;">31/03/2022</div>
<div style="left:356px;top:308px;width:59px;height:19px;background:#ebebeb;"></div>
<div class="t" style="top:311px;height:16px;line-height:16px;font-size:10.0px;color:#353535;font-weight:bold;left:352.7px;width:60px;text-align:right;">$0</div>
<div style="left:415px;top:308px;width:1px;height:19px;background:#e2e2e2;"></div>
<div style="left:416px;top:308px;width:60px;height:19px;background:#ebebeb;"></div>
<div class="t" style="top:311px;height:16px;line-height:16px;font-size:10.0px;color:#353535;font-weight:bold;left:413.7px;width:60px;text-align:right;">$0</div>
<div style="left:476px;top:308px;width:1px;height:19px;background:#e2e2e2;"></div>
<div style="left:477px;top:308px;width:70px;height:19px;background:#fff;"></div>
<div class="t" style="top:311px;height:16px;line-height:16px;font-size:10.2px;color:#626262;left:484.70000000000005px;width:60px;text-align:right;">$0</div>
<div style="left:547px;top:308px;width:1px;height:19px;background:#e6e6e6;"></div>
<div style="left:548px;top:308px;width:59px;height:19px;background:#fff;"></div>
<div class="t" style="top:311px;height:16px;line-height:16px;font-size:10.2px;color:#626262;left:544.7px;width:60px;text-align:right;">$0</div>
<div style="left:607px;top:308px;width:1px;height:19px;background:#e6e6e6;"></div>
<div style="left:608px;top:308px;width:59px;height:19px;background:#ebebeb;"></div>
<div class="t" style="top:311px;height:16px;line-height:16px;font-size:10.0px;color:#353535;font-weight:bold;left:604.7px;width:60px;text-align:right;">$0</div>
<div style="left:667px;top:308px;width:1px;height:19px;background:#e2e2e2;"></div>
<div style="left:668px;top:308px;width:63px;height:19px;background:#ebebeb;"></div>
<div class="t" style="top:311px;height:16px;line-height:16px;font-size:10.0px;color:#353535;font-weight:bold;left:668.7px;width:60px;text-align:right;">$0</div>
<div style="left:731px;top:308px;width:1px;height:19px;background:#e2e2e2;"></div>
<div style="left:732px;top:308px;width:56px;height:19px;background:#ebebeb;"></div>
<div class="t" style="top:311px;height:16px;line-height:16px;font-size:10.0px;color:#353535;font-weight:bold;left:725.7px;width:60px;text-align:right;">$0</div>
<div style="left:788px;top:308px;width:1px;height:19px;background:#e2e2e2;"></div>
<div style="left:789px;top:308px;width:59px;height:19px;background:#ebebeb;"></div>
<div class="t" style="top:311px;height:16px;line-height:16px;font-size:10.0px;color:#353535;font-weight:bold;left:785.7px;width:60px;text-align:right;">$0</div>
<div style="left:848px;top:308px;width:1px;height:19px;background:#e2e2e2;"></div>
<div style="left:849px;top:308px;width:59px;height:19px;background:#ebebeb;"></div>
<div class="t" style="top:311px;height:16px;line-height:16px;font-size:10.0px;color:#353535;font-weight:bold;left:845.7px;width:60px;text-align:right;">$0</div>
<div style="left:908px;top:308px;width:1px;height:19px;background:#e2e2e2;"></div>
<div style="left:909px;top:308px;width:59px;height:19px;background:#ebebeb;"></div>
<div class="t" style="top:311px;height:16px;line-height:16px;font-size:10.0px;color:#353535;font-weight:bold;left:905.7px;width:60px;text-align:right;">-$1,495</div>
<div style="left:968px;top:308px;width:1px;height:19px;background:#e2e2e2;"></div>
<div style="left:969px;top:308px;width:68px;height:19px;background:#fff;"></div>
<div class="t" style="top:311px;height:16px;line-height:16px;font-size:10.2px;color:#626262;left:974.7px;width:60px;text-align:right;">$0</div>
<div style="left:1037px;top:308px;width:1px;height:19px;background:#e6e6e6;"></div>
<div style="left:1038px;top:308px;width:59px;height:19px;background:#ebebeb;"></div>
<div class="t" style="top:311px;height:16px;line-height:16px;font-size:10.0px;color:#353535;font-weight:bold;left:1034.7px;width:60px;text-align:right;">$0</div>
<div style="left:1097px;top:308px;width:1px;height:19px;background:#e2e2e2;"></div>
<div style="left:1098px;top:308px;width:59px;height:19px;background:#ebebeb;"></div>
<div class="t" style="top:311px;height:16px;line-height:16px;font-size:10.0px;color:#353535;font-weight:bold;left:1094.7px;width:60px;text-align:right;">$0</div>
<div style="left:1157px;top:308px;width:1px;height:19px;background:#e2e2e2;"></div>
<div style="left:1158px;top:308px;width:59px;height:19px;background:#ebebeb;"></div>
<div class="t" style="top:311px;height:16px;line-height:16px;font-size:10.0px;color:#353535;font-weight:bold;left:1154.7px;width:60px;text-align:right;">$0</div>
<div style="left:1217px;top:308px;width:1px;height:19px;background:#e2e2e2;"></div>
<div style="left:1218px;top:308px;width:59px;height:19px;background:#ebebeb;"></div>
<div class="t" style="top:311px;height:16px;line-height:16px;font-size:10.0px;color:#353535;font-weight:bold;left:1214.7px;width:60px;text-align:right;">$0</div>
<div style="left:1277px;top:308px;width:1px;height:19px;background:#e2e2e2;"></div>
<div style="left:1278px;top:308px;width:59px;height:19px;background:#ebebeb;"></div>
<div class="t" style="top:311px;height:16px;line-height:16px;font-size:10.0px;color:#353535;font-weight:bold;left:1274.7px;width:60px;text-align:right;">$0</div>
<div style="left:1337px;top:308px;width:1px;height:19px;background:#e2e2e2;"></div>
<div style="left:1338px;top:308px;width:59px;height:19px;background:#ebebeb;"></div>
<div class="t" style="top:311px;height:16px;line-height:16px;font-size:10.0px;color:#353535;font-weight:bold;left:1334.7px;width:60px;text-align:right;">-$1,259</div>
<div style="left:1397px;top:308px;width:1px;height:19px;background:#e2e2e2;"></div>
<div style="left:1398px;top:308px;width:59px;height:19px;background:#ebebeb;"></div>
<div class="t" style="top:311px;height:16px;line-height:16px;font-size:10.0px;color:#353535;font-weight:bold;left:1394.7px;width:60px;text-align:right;">-$1,259</div>
<div style="left:1457px;top:308px;width:1px;height:19px;background:#e2e2e2;"></div>
<div style="left:1458px;top:308px;width:59px;height:19px;background:#ebebeb;"></div>
<div class="t" style="top:311px;height:16px;line-height:16px;font-size:10.0px;color:#353535;font-weight:bold;left:1454.7px;width:60px;text-align:right;">$0</div>
<div style="left:1517px;top:308px;width:1px;height:19px;background:#e2e2e2;"></div>
<div style="left:1518px;top:308px;width:59px;height:19px;background:#ebebeb;"></div>
<div class="t" style="top:311px;height:16px;line-height:16px;font-size:10.0px;color:#353535;font-weight:bold;left:1514.7px;width:60px;text-align:right;">$0</div>
<div style="left:1577px;top:308px;width:1px;height:19px;background:#e2e2e2;"></div>
<div style="left:1578px;top:308px;width:59px;height:19px;background:#ebebeb;"></div>
<div class="t" style="top:311px;height:16px;line-height:16px;font-size:10.0px;color:#353535;font-weight:bold;left:1574.7px;width:60px;text-align:right;">-$1,259</div>
<div style="left:1637px;top:308px;width:1px;height:19px;background:#e2e2e2;"></div>
<div style="left:244px;top:308px;width:1px;height:19px;background:#e2e2e2;"></div>
<div style="left:294px;top:308px;width:1px;height:19px;background:#e2e2e2;"></div>
<div style="left:72px;top:327px;width:1566px;height:1px;background:#e0e0e0;"></div>
<div style="left:72px;top:328px;width:172px;height:19px;background:#fff;"></div>
<div class="t" style="top:331px;height:16px;line-height:16px;font-size:10.2px;color:#3c3c3c;left:75.3px;">December 2021</div>
<div style="left:245px;top:328px;width:49px;height:19px;background:#ebebeb;"></div>
<svg style="left:263px;top:331px;" width="13" height="13" viewBox="0 0 13 13"><rect x="0.5" y="0.5" width="12" height="12" fill="#fff" stroke="#b9b9b9"/><path d="M3 6.6 L5.4 9 L10 3.6" fill="none" stroke="#3a3a3a" stroke-width="1.4"/></svg>
<div style="left:295px;top:328px;width:59px;height:19px;background:#fff;"></div>
<div class="t" style="top:330px;height:16px;line-height:16px;font-size:10.6px;color:#4a4a4a;left:297.5px;">31/12/2021</div>
<div style="left:356px;top:328px;width:59px;height:19px;background:#ebebeb;"></div>
<div class="t" style="top:331px;height:16px;line-height:16px;font-size:10.0px;color:#353535;font-weight:bold;left:352.7px;width:60px;text-align:right;">$0</div>
<div style="left:415px;top:328px;width:1px;height:19px;background:#e2e2e2;"></div>
<div style="left:416px;top:328px;width:60px;height:19px;background:#ebebeb;"></div>
<div class="t" style="top:331px;height:16px;line-height:16px;font-size:10.0px;color:#353535;font-weight:bold;left:413.7px;width:60px;text-align:right;">$0</div>
<div style="left:476px;top:328px;width:1px;height:19px;background:#e2e2e2;"></div>
<div style="left:477px;top:328px;width:70px;height:19px;background:#fff;"></div>
<div class="t" style="top:331px;height:16px;line-height:16px;font-size:10.2px;color:#626262;left:484.70000000000005px;width:60px;text-align:right;">$0</div>
<div style="left:547px;top:328px;width:1px;height:19px;background:#e6e6e6;"></div>
<div style="left:548px;top:328px;width:59px;height:19px;background:#fff;"></div>
<div class="t" style="top:331px;height:16px;line-height:16px;font-size:10.2px;color:#626262;left:544.7px;width:60px;text-align:right;">$0</div>
<div style="left:607px;top:328px;width:1px;height:19px;background:#e6e6e6;"></div>
<div style="left:608px;top:328px;width:59px;height:19px;background:#ebebeb;"></div>
<div class="t" style="top:331px;height:16px;line-height:16px;font-size:10.0px;color:#353535;font-weight:bold;left:604.7px;width:60px;text-align:right;">$1,495</div>
<div style="left:667px;top:328px;width:1px;height:19px;background:#e2e2e2;"></div>
<div style="left:668px;top:328px;width:63px;height:19px;background:#ebebeb;"></div>
<div class="t" style="top:331px;height:16px;line-height:16px;font-size:10.0px;color:#353535;font-weight:bold;left:668.7px;width:60px;text-align:right;">$0</div>
<div style="left:731px;top:328px;width:1px;height:19px;background:#e2e2e2;"></div>
<div style="left:732px;top:328px;width:56px;height:19px;background:#ebebeb;"></div>
<div class="t" style="top:331px;height:16px;line-height:16px;font-size:10.0px;color:#353535;font-weight:bold;left:725.7px;width:60px;text-align:right;">$1,495</div>
<div style="left:788px;top:328px;width:1px;height:19px;background:#e2e2e2;"></div>
<div style="left:789px;top:328px;width:59px;height:19px;background:#ebebeb;"></div>
<div class="t" style="top:331px;height:16px;line-height:16px;font-size:10.0px;color:#353535;font-weight:bold;left:785.7px;width:60px;text-align:right;">$0</div>
<div style="left:848px;top:328px;width:1px;height:19px;background:#e2e2e2;"></div>
<div style="left:849px;top:328px;width:59px;height:19px;background:#ebebeb;"></div>
<div class="t" style="top:331px;height:16px;line-height:16px;font-size:10.0px;color:#353535;font-weight:bold;left:845.7px;width:60px;text-align:right;">$1,495</div>
<div style="left:908px;top:328px;width:1px;height:19px;background:#e2e2e2;"></div>
<div style="left:909px;top:328px;width:59px;height:19px;background:#ebebeb;"></div>
<div class="t" style="top:331px;height:16px;line-height:16px;font-size:10.0px;color:#353535;font-weight:bold;left:905.7px;width:60px;text-align:right;">$1,495</div>
<div style="left:968px;top:328px;width:1px;height:19px;background:#e2e2e2;"></div>
<div style="left:969px;top:328px;width:68px;height:19px;background:#fff;"></div>
<div class="t" style="top:331px;height:16px;line-height:16px;font-size:10.2px;color:#626262;left:974.7px;width:60px;text-align:right;">$0</div>
<div style="left:1037px;top:328px;width:1px;height:19px;background:#e6e6e6;"></div>
<div style="left:1038px;top:328px;width:59px;height:19px;background:#ebebeb;"></div>
<div class="t" style="top:331px;height:16px;line-height:16px;font-size:10.0px;color:#353535;font-weight:bold;left:1034.7px;width:60px;text-align:right;">$1,259</div>
<div style="left:1097px;top:328px;width:1px;height:19px;background:#e2e2e2;"></div>
<div style="left:1098px;top:328px;width:59px;height:19px;background:#ebebeb;"></div>
<div class="t" style="top:331px;height:16px;line-height:16px;font-size:10.0px;color:#353535;font-weight:bold;left:1094.7px;width:60px;text-align:right;">$1,259</div>
<div style="left:1157px;top:328px;width:1px;height:19px;background:#e2e2e2;"></div>
<div style="left:1158px;top:328px;width:59px;height:19px;background:#ebebeb;"></div>
<div class="t" style="top:331px;height:16px;line-height:16px;font-size:10.0px;color:#353535;font-weight:bold;left:1154.7px;width:60px;text-align:right;">$0</div>
<div style="left:1217px;top:328px;width:1px;height:19px;background:#e2e2e2;"></div>
<div style="left:1218px;top:328px;width:59px;height:19px;background:#ebebeb;"></div>
<div class="t" style="top:331px;height:16px;line-height:16px;font-size:10.0px;color:#353535;font-weight:bold;left:1214.7px;width:60px;text-align:right;">$0</div>
<div style="left:1277px;top:328px;width:1px;height:19px;background:#e2e2e2;"></div>
<div style="left:1278px;top:328px;width:59px;height:19px;background:#ebebeb;"></div>
<div class="t" style="top:331px;height:16px;line-height:16px;font-size:10.0px;color:#353535;font-weight:bold;left:1274.7px;width:60px;text-align:right;">$1,259</div>
<div style="left:1337px;top:328px;width:1px;height:19px;background:#e2e2e2;"></div>
<div style="left:1338px;top:328px;width:59px;height:19px;background:#ebebeb;"></div>
<div class="t" style="top:331px;height:16px;line-height:16px;font-size:10.0px;color:#353535;font-weight:bold;left:1334.7px;width:60px;text-align:right;">$1,259</div>
<div style="left:1397px;top:328px;width:1px;height:19px;background:#e2e2e2;"></div>
<div style="left:1398px;top:328px;width:59px;height:19px;background:#ebebeb;"></div>
<div class="t" style="top:331px;height:16px;line-height:16px;font-size:10.0px;color:#353535;font-weight:bold;left:1394.7px;width:60px;text-align:right;">$1,259</div>
<div style="left:1457px;top:328px;width:1px;height:19px;background:#e2e2e2;"></div>
<div style="left:1458px;top:328px;width:59px;height:19px;background:#ebebeb;"></div>
<div class="t" style="top:331px;height:16px;line-height:16px;font-size:10.0px;color:#353535;font-weight:bold;left:1454.7px;width:60px;text-align:right;">$0</div>
<div style="left:1517px;top:328px;width:1px;height:19px;background:#e2e2e2;"></div>
<div style="left:1518px;top:328px;width:59px;height:19px;background:#ebebeb;"></div>
<div class="t" style="top:331px;height:16px;line-height:16px;font-size:10.0px;color:#353535;font-weight:bold;left:1514.7px;width:60px;text-align:right;">$0</div>
<div style="left:1577px;top:328px;width:1px;height:19px;background:#e2e2e2;"></div>
<div style="left:1578px;top:328px;width:59px;height:19px;background:#ebebeb;"></div>
<div class="t" style="top:331px;height:16px;line-height:16px;font-size:10.0px;color:#353535;font-weight:bold;left:1574.7px;width:60px;text-align:right;">$1,259</div>
<div style="left:1637px;top:328px;width:1px;height:19px;background:#e2e2e2;"></div>
<div style="left:244px;top:328px;width:1px;height:19px;background:#e2e2e2;"></div>
<div style="left:294px;top:328px;width:1px;height:19px;background:#e2e2e2;"></div>
<div style="left:72px;top:347px;width:1566px;height:1px;background:#e0e0e0;"></div>
<div style="left:71px;top:228px;width:1px;height:120px;background:#d8d8d8;"></div>
<div style="left:354px;top:183px;width:2px;height:165px;background:#9c9c9c;"></div>
<svg style="left:57px;top:233px;" width="7" height="9" viewBox="0 0 7 9"><path d="M1.2 1.2 L5.2 4.6 L1.2 8 Z" fill="#666"/></svg>
<div style="left:72px;top:227px;width:172px;height:20px;border:1px dotted #6a6a6a;box-sizing:border-box;"></div>
<div style="left:51px;top:498px;width:398px;height:339px;border:1px solid #e3e3e3;box-sizing:border-box;"></div>
<div class="t" style="top:509px;height:20px;line-height:20px;font-size:12.5px;color:#4a4a4a;left:63px;">Revenue to date</div>
<svg style="left:363px;top:513px;" width="10" height="10" viewBox="0 0 10 10"><rect x="1.5" y="1.5" width="7.5" height="7" fill="none" stroke="#8e8e8e" stroke-width="1"/></svg>
<svg style="left:393px;top:513px;" width="10" height="11" viewBox="0 0 10 11"><g fill="none" stroke="#8a8a8a" stroke-width="0.9"><path d="M2.6 1.9 H7.4 M3.7 1.9 V6 M6.3 1.9 V6 M1.5 6.3 H8.5 M5 6.3 V10"/></g></svg>
<svg style="left:424px;top:513px;" width="10" height="10" viewBox="0 0 10 10"><path d="M1 1 L9 9 M9 1 L1 9" stroke="#8a8a8a" stroke-width="0.9"/></svg>
<div style="left:158px;top:553px;width:92px;height:17px;background:#fff;border:1px solid #e4e4e4;box-sizing:border-box;"></div>
<div class="t" style="top:555px;height:16px;line-height:16px;font-size:10.15px;color:#555;left:160.3px;width:86px;text-align:right;">$0.00</div>
<div class="t" style="top:554px;height:16px;line-height:16px;font-size:10.9px;color:#3a3a3a;font-weight:bold;left:54.5px;letter-spacing:0.174px;">Cert. Total</div>
<div style="left:158px;top:575px;width:92px;height:17px;background:#fff;border:1px solid #adadad;box-sizing:border-box;"></div>
<div class="t" style="top:577px;height:16px;line-height:16px;font-size:10.15px;color:#555;left:160.3px;width:86px;text-align:right;">$0.00</div>
<div class="t" style="top:577px;height:16px;line-height:16px;font-size:10.3px;color:#555;font-style:italic;left:55px;">less</div>
<div class="t" style="top:577px;height:16px;line-height:16px;font-size:10.15px;color:#4a4a4a;left:85px;">Retention</div>
<div style="left:158px;top:596px;width:92px;height:17px;background:#fff;border:1px solid #adadad;box-sizing:border-box;"></div>
<div class="t" style="top:598px;height:16px;line-height:16px;font-size:10.15px;color:#555;left:160.3px;width:86px;text-align:right;">$0.00</div>
<div class="t" style="top:597px;height:16px;line-height:16px;font-size:10.15px;color:#4a4a4a;left:85px;">Security</div>
<div style="left:158px;top:618px;width:92px;height:17px;background:#fff;border:1px solid #e4e4e4;box-sizing:border-box;"></div>
<div class="t" style="top:620px;height:16px;line-height:16px;font-size:10.15px;color:#555;left:160.3px;width:86px;text-align:right;">$0.00</div>
<div class="t" style="top:619px;height:16px;line-height:16px;font-size:10.15px;color:#4a4a4a;left:85px;">Prev. paid</div>
<div style="left:158px;top:640px;width:92px;height:17px;background:#fff;border:1px solid #e4e4e4;box-sizing:border-box;"></div>
<div class="t" style="top:641px;height:16px;line-height:16px;font-size:10.15px;color:#555;left:160.3px;width:86px;text-align:right;">$0.00</div>
<div class="t" style="top:640px;height:16px;line-height:16px;font-size:10.9px;color:#3a3a3a;font-weight:bold;left:54.5px;letter-spacing:-0.073px;">Payment owing</div>
<div style="left:158px;top:662px;width:92px;height:17px;background:#fff;border:1px solid #e4e4e4;box-sizing:border-box;"></div>
<div class="t" style="top:663px;height:16px;line-height:16px;font-size:10.15px;color:#555;left:160.3px;width:86px;text-align:right;">$823,040.53</div>
<div class="t" style="top:662px;height:16px;line-height:16px;font-size:10.9px;color:#3a3a3a;font-weight:bold;left:54.5px;letter-spacing:-0.051px;">At completion</div>
<div class="t" style="top:701px;height:16px;line-height:16px;font-size:10.9px;color:#3a3a3a;font-weight:bold;left:54.5px;letter-spacing:-0.091px;">Rev. calc basis</div>
<svg style="left:157.5px;top:701px;" width="16" height="16" viewBox="0 0 16 16"><circle cx="8" cy="8" r="6.6" fill="#fff" stroke="#adadad" stroke-width="1"/></svg>
<div class="t" style="top:703px;height:16px;line-height:16px;font-size:10.3px;color:#4a4a4a;left:177px;">Claim</div>
<svg style="left:208.5px;top:701px;" width="16" height="16" viewBox="0 0 16 16"><circle cx="8" cy="8" r="6.6" fill="#fff" stroke="#adadad" stroke-width="1"/><circle cx="8" cy="8" r="2.7" fill="#4d4d4d"/></svg>
<div class="t" style="top:703px;height:16px;line-height:16px;font-size:10.3px;color:#4a4a4a;left:228.3px;">Cert</div>
<div style="left:453px;top:498px;width:399px;height:339px;border:1px solid #e3e3e3;box-sizing:border-box;"></div>
<div class="t" style="top:509px;height:20px;line-height:20px;font-size:12.5px;color:#4a4a4a;left:465.7px;">Revenue this claim</div>
<svg style="left:765px;top:513px;" width="10" height="10" viewBox="0 0 10 10"><rect x="1.5" y="1.5" width="7.5" height="7" fill="none" stroke="#8e8e8e" stroke-width="1"/></svg>
<svg style="left:795px;top:513px;" width="10" height="11" viewBox="0 0 10 11"><g fill="none" stroke="#8a8a8a" stroke-width="0.9"><path d="M2.6 1.9 H7.4 M3.7 1.9 V6 M6.3 1.9 V6 M1.5 6.3 H8.5 M5 6.3 V10"/></g></svg>
<svg style="left:826px;top:513px;" width="10" height="10" viewBox="0 0 10 10"><path d="M1 1 L9 9 M9 1 L1 9" stroke="#8a8a8a" stroke-width="0.9"/></svg>
<div style="left:560px;top:553px;width:92px;height:17px;background:#fff;border:1px solid #e4e4e4;box-sizing:border-box;"></div>
<div class="t" style="top:555px;height:16px;line-height:16px;font-size:10.15px;color:#555;left:562.8px;width:86px;text-align:right;">$0.00</div>
<div class="t" style="top:554px;height:16px;line-height:16px;font-size:10.9px;color:#3a3a3a;font-weight:bold;left:456.5px;letter-spacing:0.174px;">Cert. Total</div>
<div style="left:560px;top:575px;width:92px;height:17px;background:#fff;border:1px solid #e4e4e4;box-sizing:border-box;"></div>
<div class="t" style="top:577px;height:16px;line-height:16px;font-size:10.15px;color:#555;left:562.8px;width:86px;text-align:right;">$0.00</div>
<div class="t" style="top:577px;height:16px;line-height:16px;font-size:10.3px;color:#555;font-style:italic;left:457px;">less</div>
<div class="t" style="top:577px;height:16px;line-height:16px;font-size:10.15px;color:#4a4a4a;left:478.5px;">Prev Cert</div>
<div style="left:560px;top:596px;width:92px;height:17px;background:#fff;border:1px solid #e4e4e4;box-sizing:border-box;"></div>
<div class="t" style="top:598px;height:16px;line-height:16px;font-size:10.15px;color:#555;left:562.8px;width:86px;text-align:right;">$0.00</div>
<div class="t" style="top:596px;height:16px;line-height:16px;font-size:10.9px;color:#3a3a3a;font-weight:bold;left:456.5px;letter-spacing:-0.096px;">Total this claim</div>
<div style="left:560px;top:645px;width:92px;height:17px;background:#fff;border:1px solid #adadad;box-sizing:border-box;"></div>
<div class="t" style="top:647px;height:16px;line-height:16px;font-size:10.15px;color:#555;left:562.8px;width:86px;text-align:right;">$0.00</div>
<div class="t" style="top:646px;height:16px;line-height:16px;font-size:10.9px;color:#3a3a3a;font-weight:bold;left:456.5px;letter-spacing:-0.288px;">Paid this claim</div>
<div style="left:855px;top:498px;width:399px;height:339px;border:1px solid #e3e3e3;box-sizing:border-box;"></div>
<div class="t" style="top:509px;height:20px;line-height:20px;font-size:12.5px;color:#4a4a4a;left:868.2px;">Budget to date</div>
<svg style="left:1167px;top:513px;" width="10" height="10" viewBox="0 0 10 10"><rect x="1.5" y="1.5" width="7.5" height="7" fill="none" stroke="#8e8e8e" stroke-width="1"/></svg>
<svg style="left:1197px;top:513px;" width="10" height="11" viewBox="0 0 10 11"><g fill="none" stroke="#8a8a8a" stroke-width="0.9"><path d="M2.6 1.9 H7.4 M3.7 1.9 V6 M6.3 1.9 V6 M1.5 6.3 H8.5 M5 6.3 V10"/></g></svg>
<svg style="left:1228px;top:513px;" width="10" height="10" viewBox="0 0 10 10"><path d="M1 1 L9 9 M9 1 L1 9" stroke="#8a8a8a" stroke-width="0.9"/></svg>
<div style="left:963px;top:553px;width:92px;height:17px;background:#fff;border:1px solid #e4e4e4;box-sizing:border-box;"></div>
<div class="t" style="top:555px;height:16px;line-height:16px;font-size:10.15px;color:#555;left:964.8px;width:86px;text-align:right;">$14,393.41</div>
<div class="t" style="top:554px;height:16px;line-height:16px;font-size:10.9px;color:#3a3a3a;font-weight:bold;left:859.5px;letter-spacing:-0.567px;">Claimed DJC</div>
<div style="left:963px;top:575px;width:92px;height:17px;background:#fff;border:1px solid #e4e4e4;box-sizing:border-box;"></div>
<div class="t" style="top:577px;height:16px;line-height:16px;font-size:10.15px;color:#555;left:964.8px;width:86px;text-align:right;">$0.00</div>
<div class="t" style="top:577px;height:16px;line-height:16px;font-size:10.3px;color:#555;font-style:italic;left:860px;">less</div>
<div class="t" style="top:577px;height:16px;line-height:16px;font-size:10.15px;color:#4a4a4a;left:883.3px;">DJC o/u</div>
<div style="left:963px;top:596px;width:92px;height:17px;background:#fff;border:1px solid #e4e4e4;box-sizing:border-box;"></div>
<div class="t" style="top:598px;height:16px;line-height:16px;font-size:10.15px;color:#555;left:964.8px;width:86px;text-align:right;">$14,393.41</div>
<div class="t" style="top:596px;height:16px;line-height:16px;font-size:10.9px;color:#3a3a3a;font-weight:bold;left:859.5px;letter-spacing:-0.240px;">Earned DJC (TD)</div>
<div style="left:963px;top:647px;width:92px;height:17px;background:#fff;border:1px solid #e4e4e4;box-sizing:border-box;"></div>
<div class="t" style="top:649px;height:16px;line-height:16px;font-size:10.15px;color:#555;left:964.8px;width:86px;text-align:right;">$0.00</div>
<div class="t" style="top:649px;height:16px;line-height:16px;font-size:10.3px;color:#555;font-style:italic;left:860px;">less</div>
<div class="t" style="top:649px;height:16px;line-height:16px;font-size:10.15px;color:#4a4a4a;left:883.3px;">Daycost Inv.</div>
<div style="left:963px;top:669px;width:92px;height:17px;background:#fff;border:1px solid #e4e4e4;box-sizing:border-box;"></div>
<div class="t" style="top:671px;height:16px;line-height:16px;font-size:10.15px;color:#555;left:964.8px;width:86px;text-align:right;">$0.00</div>
<div class="t" style="top:670px;height:16px;line-height:16px;font-size:10.15px;color:#4a4a4a;left:883.3px;">Daycost Accr.</div>
<div style="left:963px;top:691px;width:92px;height:17px;background:#fff;border:1px solid #e4e4e4;box-sizing:border-box;"></div>
<div class="t" style="top:693px;height:16px;line-height:16px;font-size:10.15px;color:#555;left:964.8px;width:86px;text-align:right;">$0.00</div>
<div class="t" style="top:693px;height:16px;line-height:16px;font-size:10.15px;color:#4a4a4a;left:883.3px;">Daycost No Accr.</div>
<div style="left:963px;top:712px;width:92px;height:17px;background:#fff;border:1px solid #e4e4e4;box-sizing:border-box;"></div>
<div class="t" style="top:714px;height:16px;line-height:16px;font-size:10.15px;color:#555;left:964.8px;width:86px;text-align:right;">$0.00</div>
<div class="t" style="top:714px;height:16px;line-height:16px;font-size:10.15px;color:#4a4a4a;left:883.3px;">Daycost Internal</div>
<div style="left:963px;top:734px;width:92px;height:17px;background:#fff;border:1px solid #e4e4e4;box-sizing:border-box;"></div>
<div class="t" style="top:736px;height:16px;line-height:16px;font-size:10.15px;color:#555;left:964.8px;width:86px;text-align:right;">$0.00</div>
<div class="t" style="top:737px;height:16px;line-height:16px;font-size:10.9px;color:#3a3a3a;font-weight:bold;left:859.5px;letter-spacing:0.068px;">Total daycost (TD)</div>
<div style="left:956px;top:760px;width:99px;height:2px;background:#747474;"></div>
<div style="left:963px;top:770px;width:92px;height:17px;background:#fff;border:1px solid #e4e4e4;box-sizing:border-box;"></div>
<div class="t" style="top:772px;height:16px;line-height:16px;font-size:10.15px;color:#555;left:964.8px;width:86px;text-align:right;">$14,393.41</div>
<div class="t" style="top:771px;height:16px;line-height:16px;font-size:10.9px;color:#3a3a3a;font-weight:bold;left:859.5px;letter-spacing:-0.174px;">DJC Profit (TD)</div>
<div style="left:1258px;top:498px;width:398px;height:339px;border:1px solid #e3e3e3;box-sizing:border-box;border-right:none;"></div>
<div class="t" style="top:509px;height:20px;line-height:20px;font-size:12.5px;color:#4a4a4a;left:1270.5px;">Budget this claim</div>
<svg style="left:1571px;top:513px;" width="10" height="10" viewBox="0 0 10 10"><rect x="1.5" y="1.5" width="7.5" height="7" fill="none" stroke="#8e8e8e" stroke-width="1"/></svg>
<svg style="left:1601px;top:513px;" width="10" height="11" viewBox="0 0 10 11"><g fill="none" stroke="#8a8a8a" stroke-width="0.9"><path d="M2.6 1.9 H7.4 M3.7 1.9 V6 M6.3 1.9 V6 M1.5 6.3 H8.5 M5 6.3 V10"/></g></svg>
<svg style="left:1633px;top:513px;" width="10" height="10" viewBox="0 0 10 10"><path d="M1 1 L9 9 M9 1 L1 9" stroke="#8a8a8a" stroke-width="0.9"/></svg>
<div style="left:1365.3px;top:553px;width:92px;height:17px;background:#fff;border:1px solid #e4e4e4;box-sizing:border-box;"></div>
<div class="t" style="top:555px;height:16px;line-height:16px;font-size:10.15px;color:#555;left:1367.0px;width:86px;text-align:right;">$14,393.41</div>
<div class="t" style="top:554px;height:16px;line-height:16px;font-size:10.9px;color:#3a3a3a;font-weight:bold;left:1261.8px;letter-spacing:-0.567px;">Claimed DJC</div>
<div style="left:1365.3px;top:575px;width:92px;height:17px;background:#fff;border:1px solid #e4e4e4;box-sizing:border-box;"></div>
<div class="t" style="top:577px;height:16px;line-height:16px;font-size:10.15px;color:#555;left:1367.0px;width:86px;text-align:right;">$0.00</div>
<div class="t" style="top:577px;height:16px;line-height:16px;font-size:10.3px;color:#555;font-style:italic;left:1264.0px;">less</div>
<div class="t" style="top:577px;height:16px;line-height:16px;font-size:10.15px;color:#4a4a4a;left:1286.0px;">DJC o/u change</div>
<div style="left:1365.3px;top:596px;width:92px;height:17px;background:#fff;border:1px solid #e4e4e4;box-sizing:border-box;"></div>
<div class="t" style="top:598px;height:16px;line-height:16px;font-size:10.15px;color:#555;left:1367.0px;width:86px;text-align:right;">$0.00</div>
<div class="t" style="top:597px;height:16px;line-height:16px;font-size:10.15px;color:#4a4a4a;left:1286.0px;">Prev. claim DJC</div>
<div style="left:1365.3px;top:618px;width:92px;height:17px;background:#fff;border:1px solid #e4e4e4;box-sizing:border-box;"></div>
<div class="t" style="top:620px;height:16px;line-height:16px;font-size:10.15px;color:#555;left:1367.0px;width:86px;text-align:right;">$14,393.41</div>
<div class="t" style="top:618px;height:16px;line-height:16px;font-size:10.9px;color:#3a3a3a;font-weight:bold;left:1261.8px;letter-spacing:-0.190px;">Earned DJC (Diff)</div>
<div style="left:1365.3px;top:647px;width:92px;height:17px;background:#fff;border:1px solid #e4e4e4;box-sizing:border-box;"></div>
<div class="t" style="top:649px;height:16px;line-height:16px;font-size:10.15px;color:#555;left:1367.0px;width:86px;text-align:right;">$0.00</div>
<div class="t" style="top:649px;height:16px;line-height:16px;font-size:10.3px;color:#555;font-style:italic;left:1262.3px;">less</div>
<div class="t" style="top:649px;height:16px;line-height:16px;font-size:10.15px;color:#4a4a4a;left:1287.5px;">Daycost Inv.</div>
<div style="left:1365.3px;top:669px;width:92px;height:17px;background:#fff;border:1px solid #e4e4e4;box-sizing:border-box;"></div>
<div class="t" style="top:671px;height:16px;line-height:16px;font-size:10.15px;color:#555;left:1367.0px;width:86px;text-align:right;">$0.00</div>
<div class="t" style="top:670px;height:16px;line-height:16px;font-size:10.15px;color:#4a4a4a;left:1287.5px;">Daycost Accr.</div>
<div style="left:1365.3px;top:691px;width:92px;height:17px;background:#fff;border:1px solid #e4e4e4;box-sizing:border-box;"></div>
<div class="t" style="top:693px;height:16px;line-height:16px;font-size:10.15px;color:#555;left:1367.0px;width:86px;text-align:right;">$0.00</div>
<div class="t" style="top:693px;height:16px;line-height:16px;font-size:10.15px;color:#4a4a4a;left:1287.5px;">Daycost No Accr.</div>
<div style="left:1365.3px;top:712px;width:92px;height:17px;background:#fff;border:1px solid #e4e4e4;box-sizing:border-box;"></div>
<div class="t" style="top:714px;height:16px;line-height:16px;font-size:10.15px;color:#555;left:1367.0px;width:86px;text-align:right;">$0.00</div>
<div class="t" style="top:714px;height:16px;line-height:16px;font-size:10.15px;color:#4a4a4a;left:1287.5px;">Daycost Internal</div>
<div style="left:1365.3px;top:734px;width:92px;height:17px;background:#fff;border:1px solid #e4e4e4;box-sizing:border-box;"></div>
<div class="t" style="top:736px;height:16px;line-height:16px;font-size:10.15px;color:#555;left:1367.0px;width:86px;text-align:right;">$0.00</div>
<div class="t" style="top:737px;height:16px;line-height:16px;font-size:10.9px;color:#3a3a3a;font-weight:bold;left:1261.8px;letter-spacing:0.080px;">Total daycost (Diff)</div>
<div style="left:1358px;top:760px;width:99px;height:2px;background:#747474;"></div>
<div style="left:1365.3px;top:770px;width:92px;height:17px;background:#fff;border:1px solid #e4e4e4;box-sizing:border-box;"></div>
<div class="t" style="top:772px;height:16px;line-height:16px;font-size:10.15px;color:#555;left:1367.0px;width:86px;text-align:right;">$14,393.41</div>
<div class="t" style="top:771px;height:16px;line-height:16px;font-size:10.9px;color:#3a3a3a;font-weight:bold;left:1261.8px;letter-spacing:-0.102px;">DJC Profit (Diff)</div>
<svg style="left:0px;top:0px;" width="1661" height="867" viewBox="0 0 1661 867"><g fill="none" stroke="#e20613" stroke-width="1.75">
<rect x="12.6" y="492" width="1633.6" height="324.7"/>
<rect x="30.6" y="570.8" width="274.4" height="48"/>
<rect x="444.6" y="631.4" width="251.6" height="48.6"/>
<rect x="44.8" y="837" width="38.4" height="24.2"/>
<ellipse cx="263.4" cy="226.2" rx="43.8" ry="24.4" stroke-width="1.5"/>
<ellipse cx="59.5" cy="235.6" rx="12" ry="10.5" stroke-width="1.5"/>
<path d="M280.6 218.7 L302.7 192.4 L299.5 204.6 L314.3 207.8 Z" stroke-width="1.5"/>
</g>
<path d="M416.32 167.23 L416.68 168.37 L300.9 205.6 L300.1 203 Z" fill="#e20613" stroke="#e20613" stroke-width="0.3"/>
<g font-family="Liberation Sans, sans-serif" fill="#e20613">
<text x="432" y="172" font-size="23.8" textLength="114.5" lengthAdjust="spacingAndGlyphs">Not locked</text>
<text x="125" y="466.8" font-size="22.8" textLength="162.5" lengthAdjust="spacingAndGlyphs">Summary Panel</text>
<text x="83" y="832" font-size="15.8" textLength="101" lengthAdjust="spacingAndGlyphs">Enable editing</text>
</g></svg>
</body></html>
